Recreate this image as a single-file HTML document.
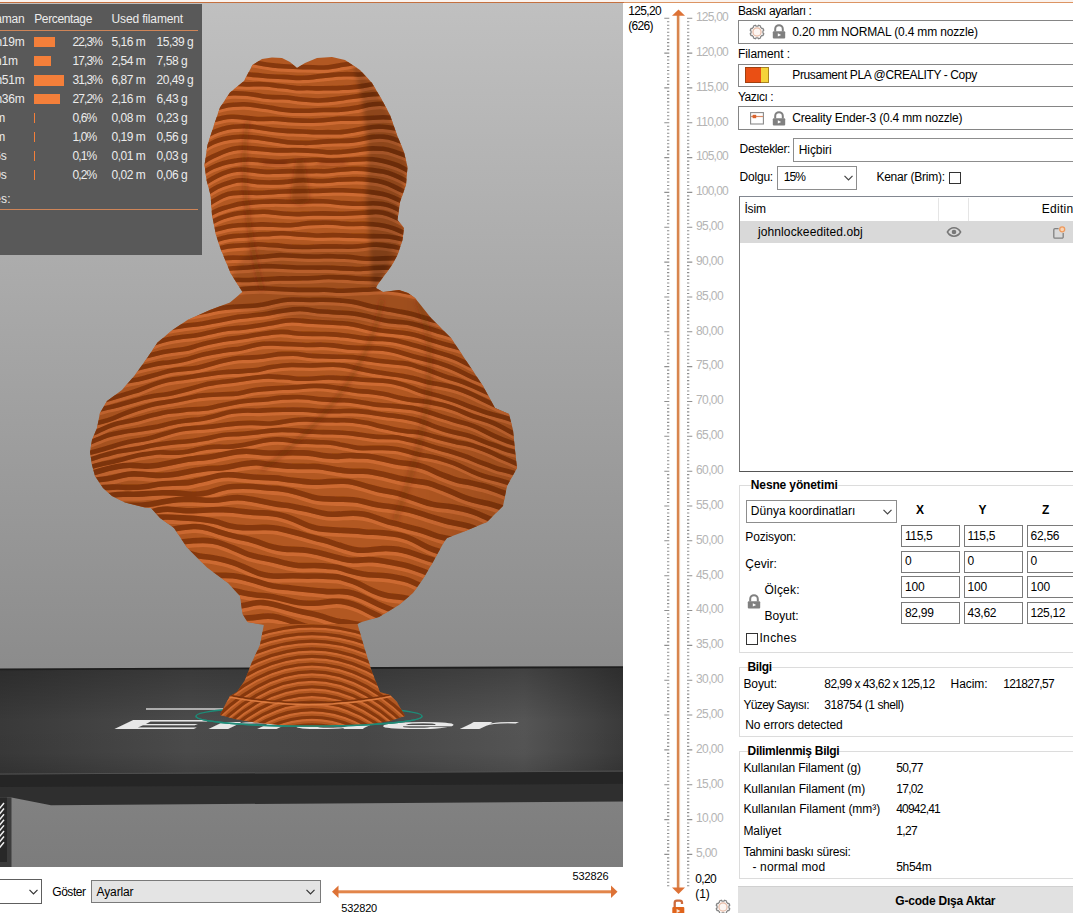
<!DOCTYPE html><html lang="tr"><head><meta charset="utf-8"><title>PrusaSlicer</title>
<style>
html,body{margin:0;padding:0;}
html{width:1073px;height:913px;overflow:hidden;}
body{width:1073px;height:913px;position:relative;overflow:hidden;background:#fff;font-family:"Liberation Sans",sans-serif;font-size:12px;color:#000;}
.t{position:absolute;white-space:nowrap;line-height:20px;height:20px;font-size:12px;}
.b{font-weight:bold;}
.bgw{background:#fff;}
.g{color:#b4b4b4;}
.s11{font-size:11px;}
.lg{color:#ececec;font-size:12px;}
.abs{position:absolute;}
.gl{position:absolute;left:0;top:3px;}
.box{position:absolute;box-sizing:border-box;border:1px solid #7a7a7a;background:#fff;}
.fld{position:absolute;box-sizing:border-box;border:1px solid #7a7a7a;background:#fff;height:22px;width:59px;}
.grp{position:absolute;box-sizing:border-box;border:1px solid #dcdcdc;border-right:none;}
.chev{position:absolute;width:9px;height:6px;}

</style></head><body>
<div class="abs" style="left:0;top:0;width:1073px;height:2px;background:#fbf3ee"></div>
<div class="abs" style="left:0;top:2px;width:624px;height:1px;background:#c4703f"></div><div class="abs" style="left:0;top:3px;width:202px;height:1px;background:#b5683c"></div>
<div class="abs" style="left:624px;top:2px;width:449px;height:1px;background:#dc9463"></div>
<svg class="gl" width="623.3" height="864" viewBox="0 3 623.3 864">
<defs>
<linearGradient id="bg" x1="0" y1="0" x2="0" y2="1"><stop offset="0" stop-color="#c0c0c0"/><stop offset="1" stop-color="#7c7c7c"/></linearGradient>
<linearGradient id="bed" x1="0" y1="0" x2="1" y2="0"><stop offset="0" stop-color="#393939"/><stop offset="0.3" stop-color="#4b4b4b"/><stop offset="0.58" stop-color="#474747"/><stop offset="0.84" stop-color="#555"/><stop offset="1" stop-color="#3a3a3a"/></linearGradient>
<linearGradient id="bedv" x1="0" y1="0" x2="0" y2="1"><stop offset="0" stop-color="#000" stop-opacity="0.24"/><stop offset="0.5" stop-color="#000" stop-opacity="0"/><stop offset="0.8" stop-color="#000" stop-opacity="0.02"/><stop offset="1" stop-color="#000" stop-opacity="0.14"/></linearGradient>
<linearGradient id="shade" x1="0" y1="0" x2="1" y2="0"><stop offset="0" stop-color="#000" stop-opacity="0.08"/><stop offset="0.25" stop-color="#000" stop-opacity="0"/><stop offset="0.7" stop-color="#000" stop-opacity="0"/><stop offset="1" stop-color="#000" stop-opacity="0.14"/></linearGradient>
<filter id="soft" x="-5%" y="-5%" width="110%" height="110%"><feGaussianBlur stdDeviation="0.5"/></filter>
<filter id="soft3" x="-10%" y="-10%" width="120%" height="120%"><feGaussianBlur stdDeviation="2.2"/></filter><filter id="soft2" x="-5%" y="-50%" width="110%" height="200%"><feGaussianBlur stdDeviation="0.7 0.5"/></filter>
<clipPath id="mclip"><path d="M262.0,59.0 L272.0,57.5 L282.0,58.0 L290.0,62.0 L297.0,68.0 L305.0,63.0 L317.0,58.0 L332.0,57.0 L345.0,60.0 L360.0,70.0 L372.0,83.0 L382.0,100.0 L390.0,115.0 L397.0,135.0 L404.0,152.0 L407.5,167.0 L406.0,185.0 L400.0,202.0 L397.5,220.0 L404.0,228.0 L402.5,240.0 L397.5,255.0 L392.0,265.0 L387.0,272.0 L378.0,284.0 L376.0,288.0 L383.0,292.0 L399.0,290.0 L408.0,293.0 L415.0,298.0 L431.0,318.0 L451.0,338.0 L467.0,362.0 L483.0,386.0 L495.0,408.0 L509.0,414.0 L513.0,430.0 L515.0,450.0 L517.0,468.0 L507.0,486.0 L503.0,506.0 L487.0,522.0 L463.0,532.0 L447.0,538.0 L444.0,542.0 L433.0,562.0 L423.0,579.0 L413.0,593.0 L399.0,605.0 L379.0,617.0 L360.0,622.5 L357.5,624.0 L365.0,650.0 L372.0,672.0 L380.0,692.0 L390.0,695.0 L397.0,702.0 L405.0,716.0 L390.0,721.0 L367.0,724.5 L340.0,726.0 L312.0,726.5 L285.0,725.5 L255.0,722.5 L235.0,719.0 L220.0,715.0 L225.0,705.0 L230.0,696.0 L237.0,692.0 L245.0,680.0 L252.0,662.0 L260.0,645.0 L264.0,624.0 L264.0,625.0 L247.5,622.0 L242.5,614.0 L240.0,596.0 L228.0,583.0 L207.0,567.5 L187.0,547.5 L174.0,528.0 L160.0,518.0 L151.0,508.0 L145.0,507.5 L125.0,502.5 L112.0,496.0 L103.0,488.0 L95.0,476.0 L92.0,465.0 L90.0,452.0 L92.0,440.0 L97.0,428.0 L100.0,413.0 L107.0,401.0 L122.0,390.0 L135.0,375.0 L147.5,357.5 L157.5,342.5 L172.5,330.0 L187.5,320.0 L210.0,310.0 L230.0,302.5 L242.5,292.0 L238.0,285.0 L231.0,274.0 L226.0,262.0 L221.0,250.0 L216.0,235.0 L212.0,215.0 L210.5,195.0 L206.5,180.0 L204.5,165.0 L207.5,145.0 L214.0,125.0 L220.0,107.5 L230.0,92.5 L244.0,81.0 L252.5,65.0Z"/></clipPath>
<clipPath id="cbody"><rect x="80" y="50" width="450" height="574"/></clipPath><clipPath id="cped"><rect x="200" y="624" width="230" height="110"/></clipPath>
</defs>
<rect x="0" y="3" width="624" height="864" fill="url(#bg)"/>
<polygon points="0,669.2 624,667 624,771.4 0,774.4" fill="url(#bed)"/>
<polygon points="0,669.2 624,667 624,771.4 0,774.4" fill="url(#bedv)"/>
<polygon points="0,668.4 624,666.2 624,668 0,670.2" fill="#1e1e1e"/>
<polygon points="0,774.4 624,771.4 624,801.5 51,805.2 11.5,797.5 0,797.5" fill="#2f2f2f"/>
<polygon points="0,774.4 624,771.4 624,783.8 0,787" fill="#252525"/>
<polygon points="0,773.6 624,770.6 624,771.6 0,774.600" fill="#505050"/>
<rect x="0" y="797.5" width="11.5" height="69.5" fill="#3c3c3c"/>
<rect x="0" y="797.5" width="7" height="64.5" fill="#282828"/>
<path d="M-0.5,808.5L4,803.0M-0.5,814.1L4,808.6M-0.5,819.7L4,814.2M-0.5,825.3L4,819.8M-0.5,830.9L4,825.4M-0.5,836.5L4,831.0M-0.5,842.1L4,836.6M-0.5,847.7L4,842.2" stroke="#f0f0f0" stroke-width="1.5" fill="none"/>
<g filter="url(#soft2)"><text transform="translate(112,729) scale(1.57,0.135)" x="0" y="0" font-family="Liberation Sans, sans-serif" font-style="italic" font-weight="bold" font-size="90" fill="#f4f4f4" opacity="0.93">Ender</text></g>
<rect x="146" y="708.3" width="77" height="1.4" fill="#f4f4f4" opacity="0.85" filter="url(#soft2)"/>
<ellipse cx="309" cy="716.3" rx="113" ry="9.8" fill="none" stroke="#1f8a77" stroke-width="1.5"/>
<path d="M262.0,59.0 L272.0,57.5 L282.0,58.0 L290.0,62.0 L297.0,68.0 L305.0,63.0 L317.0,58.0 L332.0,57.0 L345.0,60.0 L360.0,70.0 L372.0,83.0 L382.0,100.0 L390.0,115.0 L397.0,135.0 L404.0,152.0 L407.5,167.0 L406.0,185.0 L400.0,202.0 L397.5,220.0 L404.0,228.0 L402.5,240.0 L397.5,255.0 L392.0,265.0 L387.0,272.0 L378.0,284.0 L376.0,288.0 L383.0,292.0 L399.0,290.0 L408.0,293.0 L415.0,298.0 L431.0,318.0 L451.0,338.0 L467.0,362.0 L483.0,386.0 L495.0,408.0 L509.0,414.0 L513.0,430.0 L515.0,450.0 L517.0,468.0 L507.0,486.0 L503.0,506.0 L487.0,522.0 L463.0,532.0 L447.0,538.0 L444.0,542.0 L433.0,562.0 L423.0,579.0 L413.0,593.0 L399.0,605.0 L379.0,617.0 L360.0,622.5 L357.5,624.0 L365.0,650.0 L372.0,672.0 L380.0,692.0 L390.0,695.0 L397.0,702.0 L405.0,716.0 L390.0,721.0 L367.0,724.5 L340.0,726.0 L312.0,726.5 L285.0,725.5 L255.0,722.5 L235.0,719.0 L220.0,715.0 L225.0,705.0 L230.0,696.0 L237.0,692.0 L245.0,680.0 L252.0,662.0 L260.0,645.0 L264.0,624.0 L264.0,625.0 L247.5,622.0 L242.5,614.0 L240.0,596.0 L228.0,583.0 L207.0,567.5 L187.0,547.5 L174.0,528.0 L160.0,518.0 L151.0,508.0 L145.0,507.5 L125.0,502.5 L112.0,496.0 L103.0,488.0 L95.0,476.0 L92.0,465.0 L90.0,452.0 L92.0,440.0 L97.0,428.0 L100.0,413.0 L107.0,401.0 L122.0,390.0 L135.0,375.0 L147.5,357.5 L157.5,342.5 L172.5,330.0 L187.5,320.0 L210.0,310.0 L230.0,302.5 L242.5,292.0 L238.0,285.0 L231.0,274.0 L226.0,262.0 L221.0,250.0 L216.0,235.0 L212.0,215.0 L210.5,195.0 L206.5,180.0 L204.5,165.0 L207.5,145.0 L214.0,125.0 L220.0,107.5 L230.0,92.5 L244.0,81.0 L252.5,65.0Z" fill="#b25822"/>
<g clip-path="url(#mclip)"><g fill="none" stroke-linejoin="round" filter="url(#soft)">
<defs><path id="st" d="M88,280.8Q98,253.4 103.0,240.3Q108,227.1 113.0,214.8Q118,202.4 123.0,191.7Q128,181.0 133.0,171.4Q138,161.9 143.0,152.7Q148,143.4 153.0,134.9Q158,126.3 163.0,118.3Q168,110.3 173.0,103.3Q178,96.3 183.0,90.7Q188,85.1 193.0,80.4Q198,75.7 203.0,71.6Q208,67.5 213.0,65.4Q218,63.3 223.0,61.7Q228,60.2 233.0,60.0Q238,59.8 243.0,60.5Q248,61.2 253.0,62.1Q258,63.0 263.0,63.9Q268,64.8 273.0,65.4Q278,66.0 283.0,66.2Q288,66.3 293.0,66.7Q298,67.1 303.0,67.1Q308,67.1 313.0,67.2Q318,67.4 323.0,67.5Q328,67.6 333.0,66.6Q338,65.5 343.0,64.8Q348,64.1 353.0,63.1Q358,62.1 363.0,61.7Q368,61.3 373.0,61.0Q378,60.6 383.0,61.1Q388,61.7 393.0,62.4Q398,63.2 403.0,65.2Q408,67.2 413.0,71.1Q418,75.1 423.0,80.2Q428,85.4 433.0,91.7Q438,98.0 443.0,104.9Q448,111.8 453.0,118.8Q458,125.8 463.0,133.9Q468,142.1 473.0,151.2Q478,160.3 483.0,170.5Q488,180.7 493.0,191.9Q498,203.1 503.0,215.2Q508,227.4 513.0,240.1Q518,252.8 523.0,266.6L528,280.5M88,292.4Q98,264.8 103.0,252.0Q108,239.2 113.0,227.4Q118,215.5 123.0,204.3Q128,193.1 133.0,182.5Q138,171.9 143.0,162.5Q148,153.1 153.0,144.2Q158,135.3 163.0,127.4Q168,119.4 173.0,113.3Q178,107.1 183.0,101.6Q188,96.1 193.0,90.9Q198,85.8 203.0,81.5Q208,77.2 213.0,75.5Q218,73.9 223.0,73.2Q228,72.5 233.0,72.6Q238,72.7 243.0,73.6Q248,74.6 253.0,74.9Q258,75.1 263.0,75.8Q268,76.5 273.0,76.5Q278,76.6 283.0,76.9Q288,77.2 293.0,77.6Q298,78.0 303.0,77.8Q308,77.7 313.0,77.1Q318,76.4 323.0,75.9Q328,75.3 333.0,74.9Q338,74.4 343.0,74.2Q348,74.0 353.0,74.3Q358,74.6 363.0,74.3Q368,74.0 373.0,73.2Q378,72.5 383.0,72.6Q388,72.7 393.0,74.0Q398,75.3 403.0,77.5Q408,79.7 413.0,83.9Q418,88.0 423.0,92.4Q428,96.8 433.0,102.4Q438,108.1 443.0,114.2Q448,120.4 453.0,127.6Q458,134.9 463.0,143.2Q468,151.5 473.0,161.1Q478,170.6 483.0,181.4Q488,192.1 493.0,203.0Q498,213.9 503.0,225.9Q508,237.9 513.0,251.2Q518,264.4 523.0,278.6L528,292.9M88,302.8Q98,275.2 103.0,262.3Q108,249.4 113.0,237.5Q118,225.5 123.0,214.1Q128,202.6 133.0,192.2Q138,181.7 143.0,172.2Q148,162.8 153.0,154.3Q158,145.9 163.0,138.9Q168,131.8 173.0,125.4Q178,119.0 183.0,113.4Q188,107.8 193.0,103.0Q198,98.1 203.0,93.8Q208,89.4 213.0,87.9Q218,86.4 223.0,85.2Q228,84.0 233.0,83.8Q238,83.7 243.0,84.1Q248,84.5 253.0,84.3Q258,84.0 263.0,84.2Q268,84.4 273.0,85.1Q278,85.8 283.0,86.3Q288,86.9 293.0,87.6Q298,88.4 303.0,88.1Q308,87.9 313.0,88.2Q318,88.5 323.0,88.3Q328,88.2 333.0,88.1Q338,88.0 343.0,87.8Q348,87.6 353.0,87.1Q358,86.6 363.0,85.9Q368,85.2 373.0,84.1Q378,83.1 383.0,82.9Q388,82.8 393.0,83.8Q398,84.7 403.0,86.8Q408,88.8 413.0,92.9Q418,97.0 423.0,101.8Q428,106.6 433.0,112.2Q438,117.7 443.0,124.0Q448,130.3 453.0,138.3Q458,146.3 463.0,155.3Q468,164.4 473.0,174.1Q478,183.9 483.0,194.0Q488,204.1 493.0,215.0Q498,225.8 503.0,237.6Q508,249.4 513.0,262.5Q518,275.7 523.0,289.7L528,303.8M88,314.7Q98,286.0 103.0,272.7Q108,259.4 113.0,247.2Q118,235.0 123.0,224.3Q128,213.6 133.0,203.3Q138,193.0 143.0,184.1Q148,175.1 153.0,166.5Q158,158.0 163.0,150.2Q168,142.5 173.0,136.2Q178,129.9 183.0,124.7Q188,119.5 193.0,114.5Q198,109.6 203.0,105.5Q208,101.4 213.0,98.9Q218,96.3 223.0,94.9Q228,93.4 233.0,93.3Q238,93.2 243.0,93.5Q248,93.7 253.0,94.6Q258,95.5 263.0,96.2Q268,96.9 273.0,97.1Q278,97.2 283.0,97.3Q288,97.5 293.0,98.3Q298,99.1 303.0,99.5Q308,99.9 313.0,100.3Q318,100.6 323.0,100.3Q328,100.0 333.0,99.4Q338,98.8 343.0,98.1Q348,97.4 353.0,96.8Q358,96.1 363.0,95.4Q368,94.7 373.0,94.2Q378,93.7 383.0,94.0Q388,94.4 393.0,94.9Q398,95.4 403.0,96.9Q408,98.4 413.0,102.9Q418,107.5 423.0,112.4Q428,117.4 433.0,123.5Q438,129.5 443.0,136.4Q448,143.3 453.0,150.6Q458,157.9 463.0,166.4Q468,175.0 473.0,184.5Q478,194.1 483.0,204.4Q488,214.8 493.0,226.1Q498,237.5 503.0,249.0Q508,260.5 513.0,273.2Q518,285.9 523.0,299.5L528,313.2M88,323.5Q98,296.6 103.0,284.0Q108,271.5 113.0,259.3Q118,247.0 123.0,235.8Q128,224.6 133.0,214.4Q138,204.1 143.0,194.7Q148,185.3 153.0,177.7Q158,170.2 163.0,162.7Q168,155.3 173.0,148.2Q178,141.1 183.0,135.3Q188,129.5 193.0,124.1Q198,118.7 203.0,114.5Q208,110.4 213.0,109.0Q218,107.7 223.0,106.4Q228,105.2 233.0,104.8Q238,104.5 243.0,104.3Q248,104.2 253.0,105.1Q258,106.0 263.0,106.5Q268,107.0 273.0,108.0Q278,109.0 283.0,109.8Q288,110.5 293.0,110.6Q298,110.6 303.0,110.8Q308,110.9 313.0,110.5Q318,110.1 323.0,110.0Q328,109.9 333.0,109.9Q338,110.0 343.0,109.4Q348,108.8 353.0,108.1Q358,107.5 363.0,106.2Q368,104.9 373.0,104.3Q378,103.6 383.0,103.9Q388,104.1 393.0,105.7Q398,107.3 403.0,109.5Q408,111.6 413.0,115.3Q418,118.9 423.0,123.9Q428,128.9 433.0,134.5Q438,140.1 443.0,147.2Q448,154.3 453.0,162.2Q458,170.0 463.0,178.7Q468,187.3 473.0,196.1Q478,204.8 483.0,214.7Q488,224.6 493.0,235.7Q498,246.7 503.0,258.8Q508,271.0 513.0,284.0Q518,297.1 523.0,310.8L528,324.4M88,336.9Q98,309.0 103.0,295.7Q108,282.4 113.0,270.8Q118,259.3 123.0,247.9Q128,236.6 133.0,225.7Q138,214.9 143.0,205.0Q148,195.1 153.0,186.5Q158,177.9 163.0,170.6Q168,163.4 173.0,157.0Q178,150.6 183.0,144.9Q188,139.3 193.0,134.4Q198,129.6 203.0,125.7Q208,121.7 213.0,120.2Q218,118.8 223.0,117.7Q228,116.6 233.0,116.8Q238,117.1 243.0,117.5Q248,118.0 253.0,118.5Q258,119.1 263.0,119.0Q268,118.9 273.0,118.8Q278,118.8 283.0,119.4Q288,120.1 293.0,120.2Q298,120.4 303.0,120.6Q308,120.8 313.0,120.7Q318,120.5 323.0,120.2Q328,119.9 333.0,119.2Q338,118.5 343.0,118.6Q348,118.7 353.0,118.6Q358,118.5 363.0,118.3Q368,118.1 373.0,117.7Q378,117.3 383.0,117.2Q388,117.2 393.0,117.7Q398,118.1 403.0,120.1Q408,122.0 413.0,126.3Q418,130.7 423.0,135.3Q428,140.0 433.0,145.2Q438,150.5 443.0,156.7Q448,163.0 453.0,170.3Q458,177.5 463.0,186.6Q468,195.7 473.0,205.3Q478,214.9 483.0,225.7Q488,236.6 493.0,247.6Q498,258.7 503.0,270.4Q508,282.2 513.0,295.3Q518,308.5 523.0,322.6L528,336.7M88,346.9Q98,319.1 103.0,305.9Q108,292.7 113.0,280.3Q118,267.8 123.0,256.5Q128,245.2 133.0,235.0Q138,224.9 143.0,215.9Q148,207.0 153.0,198.7Q158,190.5 163.0,183.3Q168,176.1 173.0,169.2Q178,162.4 183.0,156.4Q188,150.5 193.0,146.0Q198,141.6 203.0,138.2Q208,134.8 213.0,132.4Q218,130.1 223.0,128.7Q228,127.3 233.0,126.8Q238,126.2 243.0,126.2Q248,126.1 253.0,126.8Q258,127.4 263.0,128.3Q268,129.2 273.0,129.7Q278,130.2 283.0,130.6Q288,131.1 293.0,131.1Q298,131.2 303.0,131.5Q308,131.8 313.0,132.1Q318,132.4 323.0,132.2Q328,132.0 333.0,132.2Q338,132.4 343.0,131.9Q348,131.4 353.0,130.5Q358,129.6 363.0,128.6Q368,127.6 373.0,127.0Q378,126.4 383.0,126.8Q388,127.2 393.0,128.1Q398,129.0 403.0,130.6Q408,132.2 413.0,136.1Q418,140.0 423.0,144.8Q428,149.6 433.0,155.7Q438,161.8 443.0,168.8Q448,175.8 453.0,183.5Q458,191.2 463.0,199.9Q468,208.6 473.0,217.8Q478,227.0 483.0,237.0Q488,247.1 493.0,258.5Q498,269.8 503.0,281.9Q508,294.0 513.0,307.1Q518,320.1 523.0,333.6L528,347.0M88,357.5Q98,330.7 103.0,317.8Q108,304.8 113.0,292.8Q118,280.8 123.0,269.5Q128,258.2 133.0,247.8Q138,237.5 143.0,228.3Q148,219.2 153.0,211.0Q158,202.8 163.0,195.6Q168,188.3 173.0,182.1Q178,175.9 183.0,169.6Q188,163.4 193.0,158.1Q198,152.8 203.0,148.7Q208,144.7 213.0,142.5Q218,140.3 223.0,139.0Q228,137.8 233.0,137.2Q238,136.6 243.0,136.8Q248,137.0 253.0,137.3Q258,137.7 263.0,138.5Q268,139.3 273.0,140.0Q278,140.7 283.0,141.6Q288,142.5 293.0,142.5Q298,142.6 303.0,142.8Q308,143.0 313.0,142.5Q318,142.1 323.0,141.6Q328,141.2 333.0,141.1Q338,141.0 343.0,140.9Q348,140.9 353.0,140.4Q358,140.0 363.0,138.7Q368,137.4 373.0,136.9Q378,136.3 383.0,136.6Q388,136.8 393.0,138.6Q398,140.4 403.0,142.5Q408,144.6 413.0,148.8Q418,153.1 423.0,158.1Q428,163.1 433.0,168.5Q438,173.8 443.0,180.6Q448,187.4 453.0,195.2Q458,203.0 463.0,211.8Q468,220.5 473.0,229.8Q478,239.1 483.0,249.2Q488,259.2 493.0,269.7Q498,280.2 503.0,292.2Q508,304.2 513.0,317.3Q518,330.3 523.0,344.6L528,358.8M88,371.4Q98,343.9 103.0,330.6Q108,317.3 113.0,304.5Q118,291.8 123.0,280.3Q128,268.7 133.0,259.0Q138,249.4 143.0,240.4Q148,231.5 153.0,223.1Q158,214.6 163.0,206.9Q168,199.3 173.0,192.6Q178,185.9 183.0,180.4Q188,174.9 193.0,170.5Q198,166.2 203.0,162.4Q208,158.6 213.0,156.4Q218,154.2 223.0,152.0Q228,149.8 233.0,148.7Q238,147.7 243.0,147.8Q248,147.9 253.0,148.4Q258,148.8 263.0,149.2Q268,149.6 273.0,150.1Q278,150.5 283.0,150.4Q288,150.3 293.0,150.1Q298,150.0 303.0,150.4Q308,150.8 313.0,151.0Q318,151.2 323.0,151.8Q328,152.5 333.0,152.3Q338,152.1 343.0,151.7Q348,151.3 353.0,150.7Q358,150.0 363.0,149.3Q368,148.5 373.0,148.4Q378,148.4 383.0,148.8Q388,149.3 393.0,151.1Q398,152.8 403.0,154.6Q408,156.3 413.0,160.1Q418,163.9 423.0,168.3Q428,172.7 433.0,179.1Q438,185.5 443.0,192.7Q448,199.8 453.0,207.4Q458,215.0 463.0,223.3Q468,231.6 473.0,240.9Q478,250.2 483.0,260.5Q488,270.8 493.0,282.5Q498,294.2 503.0,306.1Q508,318.1 513.0,331.3Q518,344.5 523.0,357.7L528,371.0M88,384.2Q98,357.0 103.0,343.9Q108,330.7 113.0,318.1Q118,305.4 123.0,294.1Q128,282.8 133.0,272.2Q138,261.5 143.0,252.5Q148,243.4 153.0,235.0Q158,226.6 163.0,218.8Q168,211.0 173.0,203.8Q178,196.6 183.0,191.0Q188,185.4 193.0,181.0Q198,176.5 203.0,172.9Q208,169.2 213.0,167.0Q218,164.8 223.0,163.3Q228,161.8 233.0,161.1Q238,160.3 243.0,159.8Q248,159.4 253.0,159.7Q258,160.0 263.0,160.6Q268,161.3 273.0,161.5Q278,161.8 283.0,161.6Q288,161.4 293.0,160.8Q298,160.2 303.0,160.2Q308,160.3 313.0,159.9Q318,159.6 323.0,160.1Q328,160.7 333.0,160.5Q338,160.3 343.0,160.1Q348,159.9 353.0,159.6Q358,159.3 363.0,159.1Q368,158.8 373.0,159.3Q378,159.8 383.0,161.0Q388,162.2 393.0,163.8Q398,165.3 403.0,168.0Q408,170.6 413.0,173.7Q418,176.9 423.0,181.3Q428,185.6 433.0,191.3Q438,197.0 443.0,204.1Q448,211.1 453.0,218.8Q458,226.5 463.0,234.4Q468,242.3 473.0,251.4Q478,260.5 483.0,271.2Q488,281.8 493.0,293.1Q498,304.4 503.0,317.4Q508,330.4 513.0,343.5Q518,356.6 523.0,370.5L528,384.4M88,395.4Q98,367.5 103.0,354.6Q108,341.8 113.0,329.4Q118,316.9 123.0,306.3Q128,295.7 133.0,285.3Q138,275.0 143.0,265.9Q148,256.8 153.0,247.9Q158,238.9 163.0,231.1Q168,223.2 173.0,215.9Q178,208.5 183.0,203.1Q188,197.7 193.0,193.0Q198,188.3 203.0,184.7Q208,181.1 213.0,178.3Q218,175.5 223.0,173.4Q228,171.3 233.0,170.2Q238,169.2 243.0,169.5Q248,169.9 253.0,170.5Q258,171.2 263.0,171.6Q268,172.0 273.0,171.8Q278,171.7 283.0,171.4Q288,171.1 293.0,171.2Q298,171.3 303.0,171.2Q308,171.2 313.0,171.1Q318,171.0 323.0,171.2Q328,171.3 333.0,170.5Q338,169.7 343.0,169.5Q348,169.2 353.0,168.8Q358,168.5 363.0,169.0Q368,169.5 373.0,170.1Q378,170.7 383.0,171.6Q388,172.5 393.0,174.6Q398,176.6 403.0,179.2Q408,181.8 413.0,185.5Q418,189.1 423.0,194.2Q428,199.2 433.0,205.2Q438,211.2 443.0,217.9Q448,224.6 453.0,231.4Q458,238.1 463.0,246.3Q468,254.6 473.0,263.7Q478,272.8 483.0,283.2Q488,293.5 493.0,305.1Q498,316.6 503.0,329.0Q508,341.4 513.0,354.0Q518,366.6 523.0,380.8L528,395.0M88,407.9Q98,379.5 103.0,366.7Q108,353.9 113.0,341.9Q118,329.8 123.0,318.5Q128,307.2 133.0,297.0Q138,286.9 143.0,277.5Q148,268.2 153.0,259.8Q158,251.4 163.0,242.9Q168,234.3 173.0,227.8Q178,221.3 183.0,215.2Q188,209.1 193.0,204.8Q198,200.5 203.0,196.4Q208,192.3 213.0,189.4Q218,186.4 223.0,184.6Q228,182.7 233.0,181.4Q238,180.0 243.0,180.3Q248,180.6 253.0,181.4Q258,182.2 263.0,182.3Q268,182.5 273.0,182.4Q278,182.4 283.0,182.1Q288,181.7 293.0,181.0Q298,180.3 303.0,180.3Q308,180.4 313.0,180.8Q318,181.1 323.0,181.0Q328,180.9 333.0,180.2Q338,179.6 343.0,179.5Q348,179.3 353.0,179.1Q358,178.9 363.0,179.3Q368,179.7 373.0,180.3Q378,180.8 383.0,182.2Q388,183.6 393.0,186.1Q398,188.6 403.0,191.0Q408,193.4 413.0,197.6Q418,201.7 423.0,206.3Q428,210.9 433.0,217.0Q438,223.0 443.0,229.4Q448,235.8 453.0,243.1Q458,250.3 463.0,258.2Q468,266.0 473.0,275.4Q478,284.8 483.0,295.0Q488,305.1 493.0,316.9Q498,328.8 503.0,340.9Q508,353.1 513.0,365.9Q518,378.7 523.0,392.7L528,406.6M88,419.3Q98,391.0 103.0,378.2Q108,365.5 113.0,353.4Q118,341.3 123.0,330.2Q128,319.1 133.0,308.6Q138,298.1 143.0,288.4Q148,278.6 153.0,269.7Q158,260.8 163.0,252.8Q168,244.8 173.0,238.2Q178,231.6 183.0,226.4Q188,221.2 193.0,216.6Q198,212.0 203.0,208.2Q208,204.4 213.0,201.3Q218,198.1 223.0,195.8Q228,193.6 233.0,193.1Q238,192.5 243.0,192.6Q248,192.7 253.0,192.8Q258,192.9 263.0,192.7Q268,192.5 273.0,192.1Q278,191.7 283.0,191.5Q288,191.3 293.0,191.1Q298,191.0 303.0,191.0Q308,191.1 313.0,191.0Q318,190.9 323.0,190.6Q328,190.4 333.0,190.3Q338,190.1 343.0,190.3Q348,190.6 353.0,190.7Q358,190.7 363.0,191.2Q368,191.7 373.0,192.4Q378,193.0 383.0,194.1Q388,195.1 393.0,197.4Q398,199.6 403.0,201.9Q408,204.3 413.0,208.5Q418,212.7 423.0,217.8Q428,222.9 433.0,228.2Q438,233.6 443.0,240.0Q448,246.5 453.0,253.5Q458,260.5 463.0,268.7Q468,276.8 473.0,286.4Q478,295.9 483.0,306.6Q488,317.2 493.0,329.1Q498,341.0 503.0,353.1Q508,365.2 513.0,378.2Q518,391.2 523.0,404.7L528,418.2M88,423.5Q98,396.5 103.0,383.9Q108,371.2 113.0,359.7Q118,348.1 123.0,336.3Q128,324.5 133.0,314.4Q138,304.3 143.0,295.1Q148,285.9 153.0,277.8Q158,269.6 163.0,262.7Q168,255.8 173.0,249.7Q178,243.7 183.0,237.7Q188,231.7 193.0,227.2Q198,222.6 203.0,219.0Q208,215.4 213.0,212.6Q218,209.9 223.0,208.3Q228,206.7 233.0,205.4Q238,204.1 243.0,203.4Q248,202.8 253.0,202.4Q258,202.0 263.0,201.7Q268,201.5 273.0,201.4Q278,201.3 283.0,201.6Q288,201.9 293.0,201.8Q298,201.8 303.0,201.4Q308,201.1 313.0,201.1Q318,201.2 323.0,201.2Q328,201.2 333.0,202.0Q338,202.8 343.0,203.0Q348,203.3 353.0,203.6Q358,203.8 363.0,203.6Q368,203.3 373.0,203.2Q378,203.2 383.0,204.1Q388,204.9 393.0,207.0Q398,209.1 403.0,212.4Q408,215.8 413.0,219.2Q418,222.6 423.0,226.9Q428,231.2 433.0,236.4Q438,241.6 443.0,248.2Q448,254.8 453.0,262.2Q458,269.7 463.0,278.3Q468,286.9 473.0,296.6Q478,306.2 483.0,316.0Q488,325.7 493.0,336.6Q498,347.5 503.0,359.4Q508,371.4 513.0,384.3Q518,397.3 523.0,411.0L528,424.7M88,401.2Q98,378.4 103.0,367.4Q108,356.5 113.0,346.5Q118,336.5 123.0,327.1Q128,317.8 133.0,309.1Q138,300.4 143.0,293.0Q148,285.6 153.0,279.3Q158,272.9 163.0,266.8Q168,260.7 173.0,255.1Q178,249.5 183.0,244.2Q188,238.9 193.0,234.6Q198,230.4 203.0,227.3Q208,224.2 213.0,221.6Q218,219.0 223.0,217.2Q228,215.4 233.0,214.2Q238,213.1 243.0,212.7Q248,212.3 253.0,212.1Q258,211.9 263.0,211.8Q268,211.7 273.0,212.5Q278,213.2 283.0,213.5Q288,213.8 293.0,214.0Q298,214.2 303.0,213.9Q308,213.6 313.0,213.5Q318,213.4 323.0,213.4Q328,213.4 333.0,213.6Q338,213.8 343.0,213.7Q348,213.5 353.0,213.3Q358,213.1 363.0,212.8Q368,212.5 373.0,212.1Q378,211.7 383.0,212.8Q388,213.8 393.0,216.2Q398,218.5 403.0,221.1Q408,223.7 413.0,227.0Q418,230.4 423.0,234.3Q428,238.2 433.0,243.2Q438,248.3 443.0,253.7Q448,259.1 453.0,266.1Q458,273.0 463.0,280.4Q468,287.7 473.0,295.0Q478,302.3 483.0,310.5Q488,318.7 493.0,327.8Q498,336.9 503.0,346.8Q508,356.7 513.0,367.5Q518,378.3 523.0,389.8L528,401.3M88,381.3Q98,362.5 103.0,353.9Q108,345.4 113.0,337.1Q118,328.9 123.0,320.9Q128,312.9 133.0,305.1Q138,297.4 143.0,290.8Q148,284.1 153.0,278.4Q158,272.7 163.0,267.7Q168,262.7 173.0,257.6Q178,252.4 183.0,248.5Q188,244.6 193.0,240.9Q198,237.3 203.0,234.5Q208,231.8 213.0,230.3Q218,228.9 223.0,227.7Q228,226.5 233.0,225.8Q238,225.0 243.0,225.0Q248,225.0 253.0,224.7Q258,224.3 263.0,224.4Q268,224.5 273.0,224.7Q278,224.8 283.0,225.1Q288,225.4 293.0,225.0Q298,224.7 303.0,223.8Q308,223.0 313.0,222.9Q318,222.7 323.0,222.6Q328,222.5 333.0,222.8Q338,223.1 343.0,223.6Q348,224.1 353.0,224.0Q358,223.9 363.0,223.8Q368,223.8 373.0,224.2Q378,224.6 383.0,225.4Q388,226.3 393.0,228.1Q398,230.0 403.0,232.3Q408,234.7 413.0,237.4Q418,240.1 423.0,243.0Q428,245.8 433.0,249.4Q438,253.0 443.0,257.3Q448,261.5 453.0,266.7Q458,271.8 463.0,278.1Q468,284.4 473.0,290.7Q478,297.0 483.0,303.9Q488,310.9 493.0,318.6Q498,326.3 503.0,334.6Q508,342.9 513.0,352.5Q518,362.1 523.0,372.0L528,382.0M88,360.2Q98,344.7 103.0,337.4Q108,330.0 113.0,323.2Q118,316.4 123.0,310.6Q128,304.7 133.0,298.9Q138,293.1 143.0,287.6Q148,282.0 153.0,277.2Q158,272.3 163.0,268.8Q168,265.3 173.0,262.0Q178,258.7 183.0,255.9Q188,253.2 193.0,250.7Q198,248.2 203.0,245.7Q208,243.2 213.0,241.3Q218,239.5 223.0,238.0Q228,236.5 233.0,236.1Q238,235.6 243.0,235.5Q248,235.3 253.0,234.7Q258,234.1 263.0,234.1Q268,234.2 273.0,233.6Q278,233.1 283.0,233.3Q288,233.5 293.0,233.9Q298,234.4 303.0,234.6Q308,234.9 313.0,235.3Q318,235.6 323.0,235.4Q328,235.1 333.0,235.1Q338,235.1 343.0,235.4Q348,235.6 353.0,235.7Q358,235.8 363.0,235.9Q368,236.1 373.0,236.1Q378,236.2 383.0,236.3Q388,236.5 393.0,237.3Q398,238.2 403.0,239.5Q408,240.9 413.0,243.3Q418,245.6 423.0,248.3Q428,251.0 433.0,254.3Q438,257.6 443.0,261.0Q448,264.5 453.0,268.8Q458,273.1 463.0,278.2Q468,283.3 473.0,289.0Q478,294.7 483.0,300.5Q488,306.3 493.0,312.5Q498,318.8 503.0,324.8Q508,330.8 513.0,338.1Q518,345.5 523.0,353.0L528,360.5M88,338.2Q98,326.8 103.0,321.9Q108,316.9 113.0,311.9Q118,307.0 123.0,302.3Q128,297.6 133.0,293.6Q138,289.5 143.0,285.5Q148,281.5 153.0,278.6Q158,275.7 163.0,273.1Q168,270.4 173.0,267.6Q178,264.8 183.0,262.1Q188,259.3 193.0,257.1Q198,254.9 203.0,252.8Q208,250.7 213.0,249.6Q218,248.6 223.0,247.5Q228,246.3 233.0,245.9Q238,245.6 243.0,245.3Q248,245.1 253.0,244.6Q258,244.0 263.0,244.5Q268,245.0 273.0,245.1Q278,245.1 283.0,245.9Q288,246.6 293.0,246.7Q298,246.7 303.0,247.0Q308,247.2 313.0,246.8Q318,246.4 323.0,246.4Q328,246.4 333.0,246.4Q338,246.3 343.0,246.5Q348,246.7 353.0,246.5Q358,246.4 363.0,245.7Q368,245.1 373.0,244.8Q378,244.4 383.0,245.1Q388,245.8 393.0,246.6Q398,247.4 403.0,249.4Q408,251.4 413.0,252.9Q418,254.4 423.0,256.3Q428,258.2 433.0,260.5Q438,262.8 443.0,266.0Q448,269.2 453.0,272.7Q458,276.3 463.0,279.8Q468,283.3 473.0,287.2Q478,291.1 483.0,294.7Q488,298.3 493.0,302.8Q498,307.3 503.0,311.9Q508,316.6 513.0,321.8Q518,327.0 523.0,332.8L528,338.7M88,320.0Q98,311.1 103.0,307.4Q108,303.6 113.0,300.6Q118,297.5 123.0,294.3Q128,291.2 133.0,288.3Q138,285.4 143.0,282.3Q148,279.2 153.0,277.0Q158,274.8 163.0,272.6Q168,270.4 173.0,269.3Q178,268.2 183.0,266.7Q188,265.2 193.0,264.4Q198,263.6 203.0,262.5Q208,261.4 213.0,260.2Q218,258.9 223.0,258.3Q228,257.6 233.0,257.6Q238,257.7 243.0,257.8Q248,257.9 253.0,257.5Q258,257.0 263.0,256.7Q268,256.3 273.0,255.7Q278,255.0 283.0,255.2Q288,255.3 293.0,255.7Q298,256.1 303.0,256.2Q308,256.3 313.0,256.5Q318,256.7 323.0,256.3Q328,256.0 333.0,256.3Q338,256.7 343.0,256.6Q348,256.5 353.0,257.3Q358,258.2 363.0,258.5Q368,258.8 373.0,258.7Q378,258.7 383.0,258.4Q388,258.1 393.0,258.1Q398,258.2 403.0,258.9Q408,259.6 413.0,261.0Q418,262.3 423.0,263.6Q428,264.8 433.0,266.4Q438,268.0 443.0,269.2Q448,270.3 453.0,272.4Q458,274.6 463.0,277.4Q468,280.1 473.0,283.1Q478,286.0 483.0,289.2Q488,292.4 493.0,295.3Q498,298.2 503.0,301.3Q508,304.4 513.0,307.9Q518,311.3 523.0,315.4L528,319.6M88,320.2Q98,312.5 103.0,309.9Q108,307.3 113.0,304.7Q118,302.2 123.0,299.2Q128,296.1 133.0,293.8Q138,291.4 143.0,289.0Q148,286.6 153.0,284.6Q158,282.6 163.0,281.5Q168,280.4 173.0,279.4Q178,278.3 183.0,277.0Q188,275.6 193.0,274.6Q198,273.5 203.0,272.1Q208,270.7 213.0,270.3Q218,269.9 223.0,269.3Q228,268.7 233.0,268.3Q238,267.9 243.0,267.8Q248,267.7 253.0,267.0Q258,266.3 263.0,266.2Q268,266.1 273.0,266.3Q278,266.5 283.0,266.8Q288,267.0 293.0,267.3Q298,267.6 303.0,267.5Q308,267.4 313.0,267.5Q318,267.7 323.0,267.5Q328,267.3 333.0,267.8Q338,268.3 343.0,268.4Q348,268.4 353.0,268.8Q358,269.2 363.0,268.8Q368,268.5 373.0,268.0Q378,267.6 383.0,267.6Q388,267.7 393.0,267.8Q398,268.0 403.0,268.8Q408,269.7 413.0,271.1Q418,272.5 423.0,273.2Q428,273.9 433.0,275.3Q438,276.7 443.0,278.3Q448,279.8 453.0,281.7Q458,283.6 463.0,285.9Q468,288.2 473.0,290.6Q478,293.1 483.0,295.8Q488,298.5 493.0,300.4Q498,302.3 503.0,305.0Q508,307.8 513.0,310.7Q518,313.7 523.0,316.8L528,319.9M88,331.0Q98,324.7 103.0,322.0Q108,319.2 113.0,316.6Q118,314.0 123.0,311.5Q128,309.0 133.0,306.1Q138,303.3 143.0,300.6Q148,297.9 153.0,295.7Q158,293.6 163.0,292.2Q168,290.8 173.0,289.3Q178,287.7 183.0,286.6Q188,285.5 193.0,283.8Q198,282.1 203.0,281.5Q208,280.9 213.0,280.2Q218,279.4 223.0,279.6Q228,279.7 233.0,279.8Q238,279.9 243.0,280.0Q248,280.1 253.0,279.7Q258,279.3 263.0,279.2Q268,279.2 273.0,278.7Q278,278.2 283.0,278.4Q288,278.5 293.0,278.4Q298,278.3 303.0,278.3Q308,278.3 313.0,278.0Q318,277.7 323.0,277.2Q328,276.8 333.0,277.1Q338,277.4 343.0,277.4Q348,277.4 353.0,278.1Q358,278.7 363.0,278.8Q368,278.8 373.0,279.0Q378,279.2 383.0,279.5Q388,279.8 393.0,280.3Q398,280.8 403.0,281.4Q408,282.1 413.0,283.2Q418,284.4 423.0,285.5Q428,286.6 433.0,287.7Q438,288.7 443.0,289.3Q448,289.9 453.0,291.7Q458,293.6 463.0,295.8Q468,297.9 473.0,300.4Q478,302.9 483.0,305.1Q488,307.3 493.0,310.0Q498,312.7 503.0,315.2Q508,317.8 513.0,321.3Q518,324.7 523.0,327.9L528,331.2M88,341.0Q98,334.5 103.0,331.7Q108,328.8 113.0,326.1Q118,323.4 123.0,320.6Q128,317.7 133.0,315.0Q138,312.3 143.0,310.6Q148,308.8 153.0,307.3Q158,305.7 163.0,304.4Q168,303.1 173.0,301.6Q178,300.1 183.0,298.6Q188,297.1 193.0,296.1Q198,295.0 203.0,294.2Q208,293.3 213.0,292.6Q218,291.9 223.0,291.2Q228,290.5 233.0,290.0Q238,289.4 243.0,289.0Q248,288.6 253.0,288.4Q258,288.2 263.0,288.3Q268,288.3 273.0,288.7Q278,289.0 283.0,289.2Q288,289.3 293.0,289.6Q298,289.9 303.0,289.9Q308,289.9 313.0,289.9Q318,289.9 323.0,289.7Q328,289.6 333.0,290.2Q338,290.9 343.0,290.8Q348,290.7 353.0,290.3Q358,289.9 363.0,289.8Q368,289.7 373.0,289.2Q378,288.8 383.0,289.0Q388,289.3 393.0,289.7Q398,290.0 403.0,291.2Q408,292.4 413.0,293.2Q418,294.1 423.0,295.1Q428,296.0 433.0,297.3Q438,298.6 443.0,300.5Q448,302.5 453.0,304.7Q458,306.9 463.0,309.0Q468,311.2 473.0,313.1Q478,315.1 483.0,317.3Q488,319.6 493.0,321.9Q498,324.1 503.0,327.0Q508,329.8 513.0,332.6Q518,335.4 523.0,338.8L528,342.3M88,350.0Q98,346.0 103.0,343.7Q108,341.4 113.0,339.3Q118,337.2 123.0,335.8Q128,334.4 133.0,332.3Q138,330.2 143.0,328.0Q148,325.8 153.0,323.8Q158,321.7 163.0,319.9Q168,318.0 173.0,316.9Q178,315.9 183.0,315.3Q188,314.7 193.0,313.8Q198,312.9 203.0,311.9Q208,310.9 213.0,309.7Q218,308.4 223.0,307.9Q228,307.3 233.0,306.9Q238,306.6 243.0,306.3Q248,306.0 253.0,305.7Q258,305.4 263.0,304.5Q268,303.5 273.0,302.3Q278,301.1 283.0,300.3Q288,299.4 293.0,299.5Q298,299.6 303.0,299.8Q308,300.0 313.0,299.9Q318,299.7 323.0,299.8Q328,299.9 333.0,300.0Q338,300.2 343.0,300.7Q348,301.2 353.0,301.9Q358,302.6 363.0,304.2Q368,305.7 373.0,306.7Q378,307.6 383.0,308.4Q388,309.3 393.0,310.3Q398,311.4 403.0,312.1Q408,312.9 413.0,314.3Q418,315.8 423.0,317.3Q428,318.8 433.0,320.2Q438,321.5 443.0,322.7Q448,323.9 453.0,325.2Q458,326.6 463.0,328.7Q468,330.8 473.0,333.1Q478,335.5 483.0,338.1Q488,340.8 493.0,343.4Q498,346.0 503.0,348.6Q508,351.2 513.0,353.9Q518,356.6 523.0,359.3L528,362.0M88,360.1Q98,355.8 103.0,352.9Q108,350.0 113.0,348.2Q118,346.3 123.0,344.1Q128,342.0 133.0,340.5Q138,339.0 143.0,337.7Q148,336.4 153.0,334.3Q158,332.1 163.0,330.3Q168,328.5 173.0,327.6Q178,326.7 183.0,325.9Q188,325.1 193.0,324.7Q198,324.4 203.0,323.5Q208,322.6 213.0,321.6Q218,320.6 223.0,319.7Q228,318.8 233.0,317.7Q238,316.6 243.0,316.4Q248,316.1 253.0,315.3Q258,314.5 263.0,314.2Q268,313.8 273.0,312.6Q278,311.4 283.0,310.7Q288,310.0 293.0,309.4Q298,308.8 303.0,309.1Q308,309.5 313.0,310.4Q318,311.3 323.0,311.5Q328,311.8 333.0,312.2Q338,312.6 343.0,312.7Q348,312.7 353.0,313.5Q358,314.2 363.0,315.2Q368,316.2 373.0,317.6Q378,319.0 383.0,320.0Q388,321.1 393.0,321.4Q398,321.8 403.0,322.3Q408,322.7 413.0,324.0Q418,325.2 423.0,326.7Q428,328.2 433.0,329.8Q438,331.5 443.0,332.9Q448,334.3 453.0,336.1Q458,338.0 463.0,339.6Q468,341.3 473.0,343.8Q478,346.4 483.0,348.8Q488,351.3 493.0,354.4Q498,357.5 503.0,360.1Q508,362.8 513.0,364.9Q518,367.1 523.0,369.5L528,371.8M88,369.7Q98,364.5 103.0,362.4Q108,360.3 113.0,357.9Q118,355.4 123.0,354.2Q128,352.9 133.0,351.2Q138,349.6 143.0,347.7Q148,345.8 153.0,343.9Q158,341.9 163.0,340.6Q168,339.2 173.0,338.3Q178,337.5 183.0,336.8Q188,336.2 193.0,335.7Q198,335.1 203.0,333.9Q208,332.6 213.0,331.7Q218,330.7 223.0,329.6Q228,328.5 233.0,328.3Q238,328.0 243.0,327.6Q248,327.2 253.0,326.3Q258,325.3 263.0,324.7Q268,324.0 273.0,323.1Q278,322.1 283.0,321.1Q288,320.2 293.0,320.3Q298,320.4 303.0,320.9Q308,321.5 313.0,321.8Q318,322.2 323.0,322.2Q328,322.3 333.0,322.7Q338,323.1 343.0,323.3Q348,323.6 353.0,324.6Q358,325.6 363.0,326.7Q368,327.8 373.0,329.1Q378,330.3 383.0,330.8Q388,331.2 393.0,331.7Q398,332.2 403.0,332.8Q408,333.4 413.0,334.4Q418,335.5 423.0,337.3Q428,339.2 433.0,340.6Q438,342.1 443.0,343.6Q448,345.0 453.0,346.3Q458,347.5 463.0,349.4Q468,351.2 473.0,353.9Q478,356.6 483.0,359.5Q488,362.5 493.0,365.1Q498,367.8 503.0,370.0Q508,372.1 513.0,374.1Q518,376.2 523.0,378.8L528,381.3M88,377.0Q98,371.9 103.0,370.1Q108,368.4 113.0,366.7Q118,365.1 123.0,363.5Q128,362.0 133.0,360.2Q138,358.5 143.0,357.1Q148,355.7 153.0,354.5Q158,353.3 163.0,352.1Q168,351.0 173.0,350.5Q178,349.9 183.0,349.3Q188,348.7 193.0,347.0Q198,345.4 203.0,344.1Q208,342.7 213.0,341.7Q218,340.7 223.0,339.8Q228,338.9 233.0,338.4Q238,337.9 243.0,337.1Q248,336.3 253.0,335.3Q258,334.3 263.0,333.7Q268,333.1 273.0,332.4Q278,331.7 283.0,331.9Q288,332.1 293.0,332.9Q298,333.7 303.0,333.7Q308,333.7 313.0,333.9Q318,334.1 323.0,334.0Q328,333.9 333.0,334.4Q338,334.8 343.0,335.3Q348,335.8 353.0,336.5Q358,337.1 363.0,337.9Q368,338.6 373.0,338.6Q378,338.7 383.0,339.0Q388,339.3 393.0,340.1Q398,340.9 403.0,342.3Q408,343.6 413.0,345.0Q418,346.3 423.0,347.8Q428,349.3 433.0,350.9Q438,352.6 443.0,353.9Q448,355.2 453.0,357.1Q458,359.0 463.0,361.6Q468,364.3 473.0,366.6Q478,368.8 483.0,371.2Q488,373.6 493.0,375.1Q498,376.5 503.0,378.7Q508,381.0 513.0,383.1Q518,385.2 523.0,387.7L528,390.2M88,385.3Q98,381.2 103.0,379.9Q108,378.5 113.0,377.1Q118,375.7 123.0,373.9Q128,372.1 133.0,370.2Q138,368.3 143.0,367.1Q148,365.9 153.0,364.7Q158,363.4 163.0,362.9Q168,362.4 173.0,361.7Q178,361.1 183.0,360.0Q188,359.0 193.0,357.4Q198,355.8 203.0,354.5Q208,353.2 213.0,352.4Q218,351.6 223.0,350.7Q228,349.9 233.0,349.4Q238,349.0 243.0,347.9Q248,346.8 253.0,345.6Q258,344.4 263.0,343.8Q268,343.3 273.0,343.5Q278,343.7 283.0,343.9Q288,344.1 293.0,344.3Q298,344.5 303.0,344.8Q308,345.2 313.0,344.9Q318,344.6 323.0,344.7Q328,344.8 333.0,345.4Q338,345.9 343.0,346.7Q348,347.5 353.0,347.6Q358,347.7 363.0,347.9Q368,348.2 373.0,348.1Q378,348.1 383.0,348.7Q388,349.3 393.0,350.4Q398,351.6 403.0,353.2Q408,354.8 413.0,356.2Q418,357.5 423.0,358.8Q428,360.0 433.0,361.3Q438,362.5 443.0,364.3Q448,366.1 453.0,368.1Q458,370.2 463.0,372.8Q468,375.5 473.0,377.6Q478,379.7 483.0,381.5Q488,383.3 493.0,384.6Q498,385.8 503.0,388.0Q508,390.2 513.0,392.6Q518,395.0 523.0,397.5L528,400.1M88,396.9Q98,392.0 103.0,389.7Q108,387.4 113.0,385.8Q118,384.3 123.0,382.7Q128,381.1 133.0,380.3Q138,379.5 143.0,378.2Q148,376.9 153.0,375.5Q158,374.0 163.0,372.6Q168,371.2 173.0,370.3Q178,369.4 183.0,369.1Q188,368.9 193.0,368.3Q198,367.7 203.0,366.3Q208,364.9 213.0,363.5Q218,362.1 223.0,360.8Q228,359.6 233.0,358.7Q238,357.9 243.0,357.7Q248,357.6 253.0,357.4Q258,357.1 263.0,356.5Q268,355.8 273.0,354.9Q278,354.1 283.0,353.9Q288,353.8 293.0,353.7Q298,353.7 303.0,354.7Q308,355.7 313.0,355.9Q318,356.2 323.0,356.3Q328,356.3 333.0,356.6Q338,356.8 343.0,356.7Q348,356.6 353.0,357.1Q358,357.7 363.0,358.4Q368,359.0 373.0,359.9Q378,360.8 383.0,361.3Q388,361.7 393.0,362.2Q398,362.7 403.0,363.1Q408,363.4 413.0,365.2Q418,366.9 423.0,368.4Q428,369.9 433.0,371.8Q438,373.7 443.0,375.6Q448,377.5 453.0,378.8Q458,380.2 463.0,382.0Q468,383.8 473.0,386.1Q478,388.4 483.0,390.7Q488,392.9 493.0,395.4Q498,398.0 503.0,399.5Q508,401.1 513.0,403.1Q518,405.1 523.0,407.1L528,409.1M88,406.8Q98,402.2 103.0,400.7Q108,399.3 113.0,397.9Q118,396.5 123.0,394.9Q128,393.4 133.0,391.9Q138,390.5 143.0,388.5Q148,386.6 153.0,384.7Q158,382.8 163.0,381.4Q168,380.0 173.0,379.3Q178,378.6 183.0,378.0Q188,377.4 193.0,376.5Q198,375.5 203.0,374.9Q208,374.2 213.0,373.5Q218,372.7 223.0,372.2Q228,371.7 233.0,371.6Q238,371.6 243.0,371.1Q248,370.7 253.0,370.4Q258,370.2 263.0,368.8Q268,367.4 273.0,366.8Q278,366.1 283.0,365.5Q288,364.9 293.0,365.0Q298,365.1 303.0,365.3Q308,365.5 313.0,365.4Q318,365.3 323.0,365.0Q328,364.7 333.0,364.7Q338,364.8 343.0,365.4Q348,366.0 353.0,367.2Q358,368.5 363.0,369.6Q368,370.7 373.0,371.5Q378,372.3 383.0,373.1Q388,374.0 393.0,374.5Q398,375.0 403.0,376.0Q408,377.0 413.0,378.1Q418,379.3 423.0,380.9Q428,382.5 433.0,383.2Q438,384.0 443.0,385.0Q448,385.9 453.0,387.3Q458,388.6 463.0,390.5Q468,392.4 473.0,394.8Q478,397.3 483.0,399.6Q488,402.0 493.0,404.3Q498,406.7 503.0,408.7Q508,410.8 513.0,413.0Q518,415.1 523.0,417.8L528,420.5M88,412.6Q98,410.0 103.0,408.7Q108,407.5 113.0,406.4Q118,405.3 123.0,403.8Q128,402.4 133.0,401.0Q138,399.6 143.0,398.1Q148,396.7 153.0,395.9Q158,395.2 163.0,394.7Q168,394.2 173.0,393.1Q178,391.9 183.0,390.6Q188,389.3 193.0,387.9Q198,386.5 203.0,385.1Q208,383.8 213.0,383.1Q218,382.4 223.0,381.8Q228,381.3 233.0,380.7Q238,380.1 243.0,379.3Q248,378.5 253.0,377.8Q258,377.1 263.0,376.7Q268,376.2 273.0,376.6Q278,377.0 283.0,377.3Q288,377.5 293.0,378.2Q298,378.9 303.0,378.8Q308,378.8 313.0,378.5Q318,378.1 323.0,377.7Q328,377.3 333.0,377.6Q338,378.0 343.0,378.1Q348,378.2 353.0,378.7Q358,379.2 363.0,379.7Q368,380.1 373.0,380.3Q378,380.4 383.0,380.7Q388,381.0 393.0,382.1Q398,383.2 403.0,384.6Q408,386.1 413.0,388.2Q418,390.3 423.0,391.7Q428,393.0 433.0,394.4Q438,395.7 443.0,397.1Q448,398.5 453.0,400.1Q458,401.6 463.0,403.8Q468,406.0 473.0,407.7Q478,409.5 483.0,411.3Q488,413.0 493.0,414.4Q498,415.8 503.0,417.1Q508,418.3 513.0,420.4Q518,422.5 523.0,425.2L528,428.0M88,424.5Q98,422.9 103.0,421.5Q108,420.2 113.0,418.3Q118,416.4 123.0,414.2Q128,412.0 133.0,410.5Q138,409.0 143.0,407.4Q148,405.8 153.0,404.5Q158,403.3 163.0,402.6Q168,401.9 173.0,401.0Q178,400.1 183.0,399.1Q188,398.0 193.0,396.9Q198,395.8 203.0,395.4Q208,395.0 213.0,394.7Q218,394.4 223.0,394.3Q228,394.1 233.0,393.9Q238,393.7 243.0,392.5Q248,391.3 253.0,390.3Q258,389.3 263.0,389.1Q268,388.8 273.0,388.4Q278,388.0 283.0,387.8Q288,387.7 293.0,387.4Q298,387.1 303.0,386.6Q308,386.1 313.0,385.9Q318,385.7 323.0,386.1Q328,386.5 333.0,387.2Q338,387.9 343.0,388.6Q348,389.3 353.0,390.3Q358,391.3 363.0,391.4Q368,391.4 373.0,392.2Q378,393.0 383.0,393.8Q388,394.7 393.0,396.1Q398,397.4 403.0,398.5Q408,399.6 413.0,400.1Q418,400.6 423.0,401.3Q428,402.1 433.0,403.0Q438,403.8 443.0,405.1Q448,406.4 453.0,408.1Q458,409.8 463.0,412.2Q468,414.5 473.0,416.2Q478,417.8 483.0,419.3Q488,420.8 493.0,422.9Q498,425.0 503.0,427.8Q508,430.7 513.0,433.1Q518,435.5 523.0,438.2L528,440.9M88,435.5Q98,431.4 103.0,428.9Q108,426.4 113.0,424.7Q118,423.0 123.0,422.2Q128,421.4 133.0,420.3Q138,419.3 143.0,417.8Q148,416.3 153.0,415.1Q158,413.8 163.0,412.7Q168,411.6 173.0,411.2Q178,410.8 183.0,410.1Q188,409.4 193.0,409.3Q198,409.3 203.0,408.8Q208,408.3 213.0,407.2Q218,406.0 223.0,405.0Q228,404.0 233.0,402.9Q238,401.7 243.0,401.2Q248,400.7 253.0,400.3Q258,399.9 263.0,399.8Q268,399.6 273.0,398.6Q278,397.6 283.0,397.4Q288,397.3 293.0,397.1Q298,396.9 303.0,397.2Q308,397.4 313.0,398.3Q318,399.3 323.0,399.4Q328,399.6 333.0,399.9Q338,400.2 343.0,400.2Q348,400.1 353.0,400.9Q358,401.7 363.0,402.6Q368,403.4 373.0,404.3Q378,405.1 383.0,405.2Q388,405.3 393.0,405.9Q398,406.6 403.0,406.9Q408,407.1 413.0,408.1Q418,409.2 423.0,410.5Q428,411.8 433.0,413.5Q438,415.3 443.0,416.9Q448,418.5 453.0,420.0Q458,421.5 463.0,422.7Q468,423.9 473.0,425.9Q478,427.8 483.0,430.4Q488,433.0 493.0,435.3Q498,437.5 503.0,439.6Q508,441.6 513.0,443.1Q518,444.5 523.0,446.6L528,448.6M88,443.3Q98,439.1 103.0,437.1Q108,435.2 113.0,434.1Q118,433.0 123.0,432.0Q128,431.0 133.0,430.5Q138,430.0 143.0,429.1Q148,428.1 153.0,427.4Q158,426.7 163.0,425.3Q168,423.8 173.0,422.8Q178,421.7 183.0,421.0Q188,420.2 193.0,419.9Q198,419.6 203.0,418.7Q208,417.8 213.0,416.6Q218,415.3 223.0,413.7Q228,412.1 233.0,411.5Q238,410.9 243.0,410.6Q248,410.4 253.0,410.6Q258,410.9 263.0,410.4Q268,410.0 273.0,409.9Q278,409.8 283.0,409.7Q288,409.6 293.0,409.6Q298,409.6 303.0,409.7Q308,409.8 313.0,410.4Q318,410.9 323.0,411.0Q328,411.2 333.0,411.3Q338,411.3 343.0,411.0Q348,410.8 353.0,410.9Q358,411.0 363.0,411.6Q368,412.1 373.0,412.9Q378,413.6 383.0,414.4Q388,415.1 393.0,415.6Q398,416.2 403.0,417.0Q408,417.9 413.0,419.1Q418,420.2 423.0,422.0Q428,423.8 433.0,425.8Q438,427.7 443.0,429.3Q448,430.8 453.0,432.1Q458,433.3 463.0,434.2Q468,435.2 473.0,437.1Q478,439.0 483.0,441.1Q488,443.1 493.0,444.8Q498,446.6 503.0,448.5Q508,450.4 513.0,451.6Q518,452.7 523.0,454.8L528,456.9M88,453.2Q98,450.8 103.0,449.3Q108,447.8 113.0,446.2Q118,444.6 123.0,443.3Q128,441.9 133.0,441.1Q138,440.3 143.0,439.5Q148,438.7 153.0,437.2Q158,435.7 163.0,434.3Q168,432.8 173.0,431.4Q178,429.9 183.0,429.1Q188,428.3 193.0,428.0Q198,427.7 203.0,427.4Q208,427.0 213.0,426.4Q218,425.7 223.0,425.0Q228,424.4 233.0,423.9Q238,423.4 243.0,423.1Q248,422.7 253.0,422.9Q258,423.1 263.0,423.4Q268,423.7 273.0,423.3Q278,422.8 283.0,421.8Q288,420.7 293.0,420.2Q298,419.8 303.0,419.5Q308,419.3 313.0,419.6Q318,419.8 323.0,420.1Q328,420.3 333.0,420.3Q338,420.4 343.0,420.2Q348,420.1 353.0,420.8Q358,421.5 363.0,422.2Q368,422.8 373.0,424.2Q378,425.7 383.0,426.8Q388,427.9 393.0,428.9Q398,429.9 403.0,430.7Q408,431.6 413.0,431.8Q418,432.1 423.0,433.4Q428,434.6 433.0,436.1Q438,437.5 443.0,438.8Q448,440.1 453.0,441.3Q458,442.6 463.0,443.3Q468,444.1 473.0,445.6Q478,447.2 483.0,449.0Q488,450.8 493.0,453.3Q498,455.9 503.0,457.9Q508,459.9 513.0,462.2Q518,464.4 523.0,466.5L528,468.5M88,460.2Q98,456.8 103.0,455.4Q108,454.1 113.0,452.7Q118,451.4 123.0,450.8Q128,450.1 133.0,449.3Q138,448.6 143.0,447.4Q148,446.3 153.0,445.3Q158,444.3 163.0,443.7Q168,443.1 173.0,442.5Q178,442.0 183.0,441.7Q188,441.4 193.0,440.7Q198,439.9 203.0,439.1Q208,438.4 213.0,437.1Q218,435.7 223.0,435.0Q228,434.3 233.0,434.2Q238,434.2 243.0,433.7Q248,433.3 253.0,432.7Q258,432.2 263.0,431.5Q268,430.9 273.0,430.4Q278,429.8 283.0,429.9Q288,430.0 293.0,430.3Q298,430.6 303.0,431.1Q308,431.5 313.0,431.8Q318,432.1 323.0,432.1Q328,432.1 333.0,432.3Q338,432.5 343.0,432.7Q348,433.0 353.0,433.6Q358,434.2 363.0,435.0Q368,435.9 373.0,436.4Q378,437.0 383.0,437.0Q388,437.0 393.0,437.1Q398,437.2 403.0,438.4Q408,439.5 413.0,440.7Q418,441.8 423.0,443.4Q428,445.0 433.0,446.6Q438,448.1 443.0,449.5Q448,450.8 453.0,452.3Q458,453.9 463.0,455.5Q468,457.2 473.0,459.4Q478,461.6 483.0,463.3Q488,465.0 493.0,467.0Q498,469.1 503.0,470.1Q508,471.1 513.0,472.8Q518,474.5 523.0,476.0L528,477.5M88,467.9Q98,464.9 103.0,463.8Q108,462.8 113.0,461.7Q118,460.5 123.0,459.2Q128,457.8 133.0,456.5Q138,455.1 143.0,454.4Q148,453.7 153.0,452.9Q158,452.1 163.0,452.4Q168,452.8 173.0,452.7Q178,452.7 183.0,452.2Q188,451.7 193.0,450.5Q198,449.2 203.0,448.3Q208,447.4 213.0,446.9Q218,446.4 223.0,446.7Q228,447.0 233.0,446.4Q238,445.7 243.0,445.0Q248,444.2 253.0,443.0Q258,441.8 263.0,440.7Q268,439.7 273.0,439.5Q278,439.2 283.0,439.6Q288,440.1 293.0,441.0Q298,441.9 303.0,441.7Q308,441.5 313.0,441.9Q318,442.3 323.0,442.2Q328,442.2 333.0,443.1Q338,444.1 343.0,445.0Q348,445.8 353.0,446.9Q358,448.1 363.0,448.1Q368,448.0 373.0,447.9Q378,447.8 383.0,447.9Q388,448.0 393.0,448.5Q398,448.9 403.0,450.2Q408,451.5 413.0,453.0Q418,454.5 423.0,455.3Q428,456.0 433.0,457.0Q438,458.0 443.0,459.6Q448,461.2 453.0,462.9Q458,464.7 463.0,467.2Q468,469.6 473.0,471.8Q478,474.0 483.0,475.7Q488,477.4 493.0,478.6Q498,479.8 503.0,481.3Q508,482.8 513.0,484.6Q518,486.4 523.0,488.8L528,491.3"/><path id="st2" d="M88,474.4Q98,471.5 103.0,470.0Q108,468.5 113.0,467.5Q118,466.5 123.0,465.8Q128,465.1 133.0,465.4Q138,465.7 143.0,466.0Q148,466.4 153.0,465.8Q158,465.2 163.0,464.2Q168,463.3 173.0,462.3Q178,461.3 183.0,460.2Q188,459.1 193.0,458.7Q198,458.2 203.0,457.9Q208,457.5 213.0,456.6Q218,455.6 223.0,454.5Q228,453.3 233.0,452.5Q238,451.6 243.0,451.4Q248,451.1 253.0,451.7Q258,452.3 263.0,452.7Q268,453.0 273.0,453.0Q278,453.0 283.0,452.9Q288,452.7 293.0,452.7Q298,452.8 303.0,452.9Q308,453.0 313.0,453.8Q318,454.6 323.0,455.4Q328,456.1 333.0,456.3Q338,456.5 343.0,455.9Q348,455.4 353.0,455.6Q358,455.9 363.0,456.0Q368,456.2 373.0,457.0Q378,457.9 383.0,459.0Q388,460.2 393.0,461.4Q398,462.7 403.0,463.0Q408,463.4 413.0,464.2Q418,465.0 423.0,466.7Q428,468.3 433.0,470.8Q438,473.3 443.0,475.2Q448,477.1 453.0,478.9Q458,480.7 463.0,481.5Q468,482.2 473.0,483.4Q478,484.5 483.0,485.8Q488,487.1 493.0,488.8Q498,490.6 503.0,492.6Q508,494.7 513.0,496.0Q518,497.4 523.0,498.6L528,499.8M88,481.5Q98,479.9 103.0,479.3Q108,478.8 113.0,477.6Q118,476.4 123.0,475.2Q128,474.0 133.0,473.9Q138,473.8 143.0,474.3Q148,474.8 153.0,475.1Q158,475.5 163.0,475.3Q168,475.1 173.0,474.5Q178,473.9 183.0,472.8Q188,471.7 193.0,470.8Q198,469.9 203.0,469.2Q208,468.4 213.0,468.3Q218,468.3 223.0,467.7Q228,467.1 233.0,466.0Q238,464.9 243.0,464.1Q248,463.4 253.0,462.9Q258,462.5 263.0,463.4Q268,464.2 273.0,464.6Q278,465.1 283.0,465.6Q288,466.1 293.0,466.2Q298,466.4 303.0,466.4Q308,466.5 313.0,466.4Q318,466.3 323.0,467.2Q328,468.1 333.0,468.9Q338,469.8 343.0,470.6Q348,471.3 353.0,471.3Q358,471.2 363.0,471.3Q368,471.4 373.0,472.3Q378,473.2 383.0,474.2Q388,475.3 393.0,476.8Q398,478.3 403.0,479.1Q408,479.8 413.0,480.7Q418,481.6 423.0,482.1Q428,482.6 433.0,484.6Q438,486.6 443.0,488.4Q448,490.2 453.0,492.6Q458,495.0 463.0,496.8Q468,498.6 473.0,500.1Q478,501.5 483.0,502.4Q488,503.2 493.0,504.9Q498,506.5 503.0,508.2Q508,509.9 513.0,511.6Q518,513.3 523.0,515.3L528,517.2M88,490.0Q98,487.7 103.0,487.5Q108,487.4 113.0,487.1Q118,486.9 123.0,487.2Q128,487.5 133.0,487.3Q138,487.2 143.0,486.7Q148,486.3 153.0,485.2Q158,484.1 163.0,483.8Q168,483.5 173.0,483.2Q178,482.9 183.0,482.9Q188,483.0 193.0,481.7Q198,480.4 203.0,479.4Q208,478.4 213.0,476.9Q218,475.5 223.0,475.0Q228,474.5 233.0,474.9Q238,475.2 243.0,476.0Q248,476.7 253.0,477.0Q258,477.2 263.0,477.5Q268,477.7 273.0,477.9Q278,478.0 283.0,479.0Q288,479.9 293.0,480.3Q298,480.8 303.0,481.4Q308,482.0 313.0,482.2Q318,482.5 323.0,482.0Q328,481.6 333.0,481.4Q338,481.2 343.0,481.2Q348,481.1 353.0,482.4Q358,483.6 363.0,485.1Q368,486.5 373.0,488.0Q378,489.5 383.0,490.4Q388,491.3 393.0,492.2Q398,493.2 403.0,494.8Q408,496.4 413.0,498.1Q418,499.7 423.0,501.5Q428,503.2 433.0,504.4Q438,505.5 443.0,505.8Q448,506.1 453.0,507.1Q458,508.1 463.0,509.1Q468,510.2 473.0,511.9Q478,513.6 483.0,516.0Q488,518.5 493.0,519.7Q498,521.0 503.0,522.3Q508,523.6 513.0,525.2Q518,526.9 523.0,529.1L528,531.3M88,499.8Q98,497.6 103.0,496.6Q108,495.6 113.0,495.0Q118,494.3 123.0,494.2Q128,494.1 133.0,494.2Q138,494.2 143.0,493.9Q148,493.5 153.0,493.2Q158,492.9 163.0,492.8Q168,492.8 173.0,492.9Q178,493.0 183.0,493.5Q188,494.1 193.0,494.2Q198,494.3 203.0,493.6Q208,492.9 213.0,491.1Q218,489.4 223.0,488.1Q228,486.7 233.0,486.5Q238,486.2 243.0,486.2Q248,486.2 253.0,486.5Q258,486.8 263.0,487.5Q268,488.2 273.0,488.3Q278,488.5 283.0,489.2Q288,489.9 293.0,491.3Q298,492.6 303.0,494.2Q308,495.9 313.0,497.2Q318,498.5 323.0,498.7Q328,498.9 333.0,499.1Q338,499.4 343.0,499.3Q348,499.3 353.0,499.8Q358,500.2 363.0,501.5Q368,502.7 373.0,504.0Q378,505.2 383.0,505.7Q388,506.2 393.0,507.0Q398,507.9 403.0,508.8Q408,509.7 413.0,511.1Q418,512.5 423.0,514.2Q428,516.0 433.0,517.4Q438,518.8 443.0,520.4Q448,522.0 453.0,522.8Q458,523.7 463.0,524.7Q468,525.6 473.0,527.7Q478,529.7 483.0,532.4Q488,535.1 493.0,537.1Q498,539.1 503.0,541.0Q508,543.0 513.0,544.7Q518,546.4 523.0,548.0L528,549.6M88,506.8Q98,507.5 103.0,507.2Q108,507.0 113.0,506.2Q118,505.5 123.0,505.4Q128,505.2 133.0,505.2Q138,505.2 143.0,505.0Q148,504.7 153.0,503.8Q158,502.9 163.0,501.8Q168,500.8 173.0,500.2Q178,499.5 183.0,499.4Q188,499.3 193.0,499.4Q198,499.6 203.0,500.0Q208,500.4 213.0,500.2Q218,500.0 223.0,499.2Q228,498.4 233.0,497.9Q238,497.4 243.0,498.0Q248,498.6 253.0,499.5Q258,500.4 263.0,501.4Q268,502.5 273.0,503.5Q278,504.5 283.0,505.0Q288,505.4 293.0,506.5Q298,507.7 303.0,508.6Q308,509.5 313.0,510.9Q318,512.2 323.0,513.2Q328,514.3 333.0,514.2Q338,514.1 343.0,513.7Q348,513.4 353.0,513.3Q358,513.3 363.0,514.1Q368,515.0 373.0,516.6Q378,518.2 383.0,520.1Q388,522.0 393.0,523.1Q398,524.1 403.0,525.7Q408,527.2 413.0,528.3Q418,529.4 423.0,531.0Q428,532.7 433.0,534.6Q438,536.5 443.0,537.6Q448,538.7 453.0,539.4Q458,540.1 463.0,540.5Q468,540.9 473.0,541.8Q478,542.6 483.0,544.3Q488,546.1 493.0,548.7Q498,551.4 503.0,554.5Q508,557.6 513.0,560.4Q518,563.1 523.0,565.3L528,567.5M88,512.3Q98,512.4 103.0,512.3Q108,512.2 113.0,512.9Q118,513.6 123.0,514.1Q128,514.5 133.0,514.5Q138,514.4 143.0,513.7Q148,512.9 153.0,511.4Q158,509.8 163.0,509.4Q168,508.9 173.0,509.5Q178,510.1 183.0,510.5Q188,510.9 193.0,510.7Q198,510.4 203.0,510.2Q208,510.0 213.0,509.8Q218,509.6 223.0,509.6Q228,509.6 233.0,510.2Q238,510.8 243.0,511.5Q248,512.2 253.0,512.5Q258,512.8 263.0,512.9Q268,513.1 273.0,513.7Q278,514.2 283.0,515.7Q288,517.1 293.0,519.1Q298,521.2 303.0,523.5Q308,525.9 313.0,527.3Q318,528.8 323.0,529.1Q328,529.5 333.0,529.9Q338,530.3 343.0,530.4Q348,530.6 353.0,530.9Q358,531.1 363.0,531.7Q368,532.2 373.0,532.3Q378,532.3 383.0,532.9Q388,533.5 393.0,534.0Q398,534.6 403.0,536.0Q408,537.4 413.0,539.8Q418,542.3 423.0,545.0Q428,547.8 433.0,549.5Q438,551.2 443.0,552.6Q448,553.9 453.0,554.7Q458,555.4 463.0,557.0Q468,558.7 473.0,560.5Q478,562.3 483.0,564.0Q488,565.7 493.0,567.9Q498,570.0 503.0,571.7Q508,573.4 513.0,576.0Q518,578.5 523.0,581.6L528,584.7M88,520.0Q98,520.7 103.0,521.2Q108,521.6 113.0,521.7Q118,521.8 123.0,521.5Q128,521.2 133.0,520.4Q138,519.7 143.0,518.6Q148,517.4 153.0,517.3Q158,517.1 163.0,517.1Q168,517.0 173.0,517.3Q178,517.6 183.0,517.9Q188,518.2 193.0,518.4Q198,518.7 203.0,519.4Q208,520.2 213.0,521.1Q218,522.0 223.0,523.9Q228,525.7 233.0,526.5Q238,527.3 243.0,527.6Q248,527.9 253.0,527.7Q258,527.5 263.0,527.4Q268,527.2 273.0,527.7Q278,528.1 283.0,529.5Q288,530.9 293.0,532.1Q298,533.2 303.0,534.6Q308,536.0 313.0,537.5Q318,538.9 323.0,540.1Q328,541.4 333.0,543.1Q338,544.7 343.0,546.4Q348,548.0 353.0,549.2Q358,550.3 363.0,550.3Q368,550.2 373.0,549.5Q378,548.9 383.0,548.6Q388,548.4 393.0,548.9Q398,549.3 403.0,550.4Q408,551.6 413.0,553.3Q418,555.0 423.0,556.9Q428,558.7 433.0,560.0Q438,561.4 443.0,563.7Q448,566.0 453.0,568.2Q458,570.5 463.0,573.2Q468,575.9 473.0,578.5Q478,581.2 483.0,582.8Q488,584.5 493.0,586.6Q498,588.7 503.0,590.8Q508,592.9 513.0,595.6Q518,598.3 523.0,601.6L528,604.8M88,525.1Q98,525.7 103.0,526.3Q108,526.9 113.0,527.1Q118,527.2 123.0,527.7Q128,528.1 133.0,528.4Q138,528.6 143.0,529.3Q148,530.1 153.0,530.6Q158,531.1 163.0,530.8Q168,530.5 173.0,529.3Q178,528.2 183.0,527.5Q188,526.8 193.0,526.5Q198,526.2 203.0,527.2Q208,528.2 213.0,529.8Q218,531.5 223.0,533.1Q228,534.7 233.0,535.9Q238,537.1 243.0,538.1Q248,539.1 253.0,540.5Q258,542.0 263.0,543.8Q268,545.6 273.0,547.0Q278,548.3 283.0,548.9Q288,549.5 293.0,549.4Q298,549.4 303.0,549.9Q308,550.4 313.0,551.4Q318,552.4 323.0,553.8Q328,555.1 333.0,556.4Q338,557.7 343.0,559.0Q348,560.3 353.0,560.4Q358,560.4 363.0,559.9Q368,559.4 373.0,559.8Q378,560.2 383.0,561.0Q388,561.9 393.0,562.8Q398,563.8 403.0,564.8Q408,565.9 413.0,567.6Q418,569.2 423.0,571.2Q428,573.1 433.0,575.7Q438,578.3 443.0,581.5Q448,584.7 453.0,587.9Q458,591.2 463.0,593.4Q468,595.5 473.0,597.4Q478,599.3 483.0,600.0Q488,600.7 493.0,602.5Q498,604.2 503.0,606.7Q508,609.2 513.0,611.5Q518,613.8 523.0,616.5L528,619.1M88,532.3Q98,530.9 103.0,530.7Q108,530.5 113.0,531.4Q118,532.3 123.0,533.6Q128,534.8 133.0,535.4Q138,535.9 143.0,536.5Q148,537.1 153.0,537.7Q158,538.4 163.0,539.3Q168,540.2 173.0,541.2Q178,542.1 183.0,541.7Q188,541.2 193.0,540.8Q198,540.4 203.0,540.4Q208,540.5 213.0,541.3Q218,542.1 223.0,544.0Q228,545.8 233.0,547.9Q238,550.0 243.0,552.2Q248,554.5 253.0,555.8Q258,557.1 263.0,558.0Q268,559.0 273.0,560.1Q278,561.3 283.0,562.6Q288,563.8 293.0,564.7Q298,565.6 303.0,565.6Q308,565.6 313.0,565.5Q318,565.4 323.0,565.9Q328,566.4 333.0,566.7Q338,567.1 343.0,568.9Q348,570.6 353.0,571.9Q358,573.1 363.0,573.9Q368,574.8 373.0,575.0Q378,575.3 383.0,575.5Q388,575.8 393.0,576.8Q398,577.8 403.0,578.8Q408,579.9 413.0,582.3Q418,584.7 423.0,586.6Q428,588.5 433.0,590.7Q438,592.9 443.0,595.9Q448,598.9 453.0,602.0Q458,605.0 463.0,608.5Q468,612.0 473.0,615.3Q478,618.5 483.0,620.8Q488,623.2 493.0,624.4Q498,625.6 503.0,626.5Q508,627.3 513.0,628.6Q518,629.8 523.0,632.5L528,635.2M88,546.3Q98,542.9 103.0,541.9Q108,540.9 113.0,540.4Q118,540.0 123.0,540.2Q128,540.4 133.0,541.4Q138,542.3 143.0,543.2Q148,544.0 153.0,544.7Q158,545.4 163.0,546.3Q168,547.2 173.0,548.4Q178,549.5 183.0,551.1Q188,552.7 193.0,554.3Q198,555.9 203.0,556.5Q208,557.0 213.0,557.7Q218,558.5 223.0,559.7Q228,560.9 233.0,562.7Q238,564.5 243.0,566.6Q248,568.7 253.0,571.1Q258,573.5 263.0,574.5Q268,575.6 273.0,576.0Q278,576.3 283.0,576.0Q288,575.8 293.0,575.8Q298,575.8 303.0,576.0Q308,576.2 313.0,576.0Q318,575.9 323.0,576.1Q328,576.4 333.0,576.6Q338,576.8 343.0,578.2Q348,579.6 353.0,581.3Q358,583.1 363.0,585.9Q368,588.7 373.0,590.8Q378,592.9 383.0,594.5Q388,596.1 393.0,596.4Q398,596.8 403.0,597.6Q408,598.4 413.0,599.5Q418,600.5 423.0,602.3Q428,604.0 433.0,605.6Q438,607.3 443.0,609.9Q448,612.5 453.0,614.9Q458,617.3 463.0,620.5Q468,623.6 473.0,627.4Q478,631.2 483.0,634.7Q488,638.3 493.0,641.8Q498,645.3 503.0,647.2Q508,649.0 513.0,650.1Q518,651.2 523.0,652.3L528,653.4M88,554.9Q98,551.9 103.0,550.4Q108,548.9 113.0,547.9Q118,546.8 123.0,546.8Q128,546.9 133.0,548.1Q138,549.4 143.0,550.9Q148,552.4 153.0,554.6Q158,556.7 163.0,558.3Q168,559.8 173.0,561.9Q178,563.9 183.0,566.1Q188,568.4 193.0,570.7Q198,573.0 203.0,573.9Q208,574.8 213.0,575.1Q218,575.5 223.0,575.4Q228,575.2 233.0,575.8Q238,576.4 243.0,577.6Q248,578.9 253.0,580.2Q258,581.6 263.0,583.3Q268,584.9 273.0,586.0Q278,587.0 283.0,587.3Q288,587.5 293.0,588.2Q298,588.8 303.0,589.3Q308,589.8 313.0,590.2Q318,590.6 323.0,591.1Q328,591.7 333.0,591.6Q338,591.5 343.0,591.6Q348,591.7 353.0,593.2Q358,594.7 363.0,597.0Q368,599.3 373.0,601.7Q378,604.2 383.0,606.4Q388,608.6 393.0,610.1Q398,611.5 403.0,612.9Q408,614.2 413.0,615.3Q418,616.5 423.0,618.1Q428,619.7 433.0,622.0Q438,624.3 443.0,626.7Q448,629.1 453.0,631.8Q458,634.5 463.0,637.1Q468,639.7 473.0,642.7Q478,645.8 483.0,649.9Q488,654.0 493.0,657.0Q498,660.0 503.0,662.6Q508,665.2 513.0,666.2Q518,667.2 523.0,667.7L528,668.2M88,561.1Q98,562.2 103.0,562.7Q108,563.2 113.0,563.6Q118,563.9 123.0,564.2Q128,564.4 133.0,564.7Q138,565.0 143.0,565.3Q148,565.5 153.0,566.2Q158,567.0 163.0,569.4Q168,571.8 173.0,574.5Q178,577.2 183.0,579.3Q188,581.5 193.0,583.0Q198,584.6 203.0,585.7Q208,586.7 213.0,587.5Q218,588.3 223.0,588.9Q228,589.5 233.0,590.6Q238,591.8 243.0,592.7Q248,593.7 253.0,594.5Q258,595.3 263.0,595.5Q268,595.7 273.0,596.7Q278,597.8 283.0,599.0Q288,600.2 293.0,601.5Q298,602.8 303.0,603.0Q308,603.3 313.0,603.3Q318,603.4 323.0,602.6Q328,601.9 333.0,601.4Q338,600.9 343.0,601.8Q348,602.7 353.0,604.2Q358,605.7 363.0,608.4Q368,611.1 373.0,613.4Q378,615.6 383.0,618.4Q388,621.1 393.0,624.1Q398,627.1 403.0,629.9Q408,632.8 413.0,635.9Q418,639.0 423.0,640.6Q428,642.1 433.0,642.9Q438,643.8 443.0,644.6Q448,645.3 453.0,646.6Q458,647.8 463.0,649.8Q468,651.8 473.0,654.6Q478,657.4 483.0,660.1Q488,662.8 493.0,665.6Q498,668.4 503.0,670.5Q508,672.5 513.0,674.6Q518,676.6 523.0,679.1L528,681.6M88,570.4Q98,573.1 103.0,574.1Q108,575.2 113.0,575.4Q118,575.7 123.0,575.6Q128,575.4 133.0,575.5Q138,575.7 143.0,576.6Q148,577.5 153.0,579.5Q158,581.4 163.0,584.0Q168,586.5 173.0,589.0Q178,591.5 183.0,593.6Q188,595.7 193.0,597.6Q198,599.4 203.0,601.4Q208,603.5 213.0,605.1Q218,606.8 223.0,607.1Q228,607.4 233.0,607.0Q238,606.5 243.0,605.5Q248,604.5 253.0,603.3Q258,602.2 263.0,602.6Q268,603.0 273.0,604.2Q278,605.4 283.0,606.9Q288,608.3 293.0,609.6Q298,610.8 303.0,611.9Q308,613.0 313.0,614.0Q318,615.0 323.0,616.7Q328,618.4 333.0,619.9Q338,621.3 343.0,621.9Q348,622.4 353.0,623.4Q358,624.4 363.0,624.7Q368,625.1 373.0,626.4Q378,627.6 383.0,630.1Q388,632.6 393.0,636.1Q398,639.6 403.0,642.6Q408,645.6 413.0,647.7Q418,649.8 423.0,651.8Q428,653.7 433.0,655.5Q438,657.3 443.0,659.4Q448,661.5 453.0,663.1Q458,664.7 463.0,666.6Q468,668.5 473.0,669.6Q478,670.8 483.0,672.2Q488,673.6 493.0,675.6Q498,677.6 503.0,680.3Q508,683.1 513.0,685.9Q518,688.6 523.0,690.5L528,692.3M88,576.0Q98,580.5 103.0,583.4Q108,586.2 113.0,588.9Q118,591.5 123.0,593.0Q128,594.4 133.0,595.4Q138,596.3 143.0,596.9Q148,597.4 153.0,598.6Q158,599.9 163.0,601.0Q168,602.2 173.0,604.0Q178,605.8 183.0,606.8Q188,607.9 193.0,608.7Q198,609.6 203.0,610.8Q208,612.1 213.0,613.1Q218,614.2 223.0,615.4Q228,616.7 233.0,617.3Q238,617.9 243.0,618.0Q248,618.1 253.0,617.6Q258,617.0 263.0,616.4Q268,615.8 273.0,616.4Q278,617.0 283.0,618.6Q288,620.1 293.0,621.9Q298,623.6 303.0,625.3Q308,627.0 313.0,627.9Q318,628.9 323.0,629.8Q328,630.8 333.0,632.4Q338,634.0 343.0,635.2Q348,636.4 353.0,637.2Q358,638.0 363.0,639.2Q368,640.4 373.0,641.2Q378,642.1 383.0,643.6Q388,645.1 393.0,648.2Q398,651.2 403.0,655.1Q408,658.9 413.0,662.3Q418,665.7 423.0,668.5Q428,671.4 433.0,673.2Q438,674.9 443.0,676.3Q448,677.7 453.0,678.9Q458,680.0 463.0,680.9Q468,681.9 473.0,682.6Q478,683.3 483.0,683.2Q488,683.0 493.0,683.6Q498,684.2 503.0,685.8Q508,687.3 513.0,689.7Q518,692.2 523.0,695.2L528,698.2M88,591.2Q98,595.4 103.0,598.0Q108,600.5 113.0,602.5Q118,604.5 123.0,605.8Q128,607.1 133.0,608.3Q138,609.5 143.0,610.3Q148,611.1 153.0,611.8Q158,612.5 163.0,613.8Q168,615.0 173.0,616.0Q178,616.9 183.0,617.7Q188,618.4 193.0,619.4Q198,620.5 203.0,622.4Q208,624.4 213.0,626.3Q218,628.1 223.0,630.0Q228,631.8 233.0,632.7Q238,633.6 243.0,633.0Q248,632.4 253.0,631.4Q258,630.3 263.0,629.5Q268,628.7 273.0,628.6Q278,628.6 283.0,629.2Q288,629.8 293.0,630.7Q298,631.6 303.0,632.5Q308,633.5 313.0,635.4Q318,637.3 323.0,640.0Q328,642.7 333.0,645.9Q338,649.0 343.0,652.2Q348,655.3 353.0,657.0Q358,658.8 363.0,659.6Q368,660.4 373.0,661.1Q378,661.9 383.0,663.2Q388,664.6 393.0,666.0Q398,667.4 403.0,669.7Q408,672.1 413.0,673.6Q418,675.2 423.0,677.0Q428,678.7 433.0,680.3Q438,681.9 443.0,684.2Q448,686.5 453.0,688.1Q458,689.7 463.0,691.3Q468,692.9 473.0,693.5Q478,694.2 483.0,694.6Q488,695.1 493.0,695.9Q498,696.7 503.0,698.3Q508,699.8 513.0,702.4Q518,705.0 523.0,707.9L528,710.8"/><path id="ps" d="M202,662.3Q312,589.7 422,662.3M202,673.9Q312,593.3 422,673.9M202,685.6Q312,596.8 422,685.6M202,697.2Q312,600.4 422,697.2M202,708.9Q312,603.9 422,708.9M202,720.5Q312,607.5 422,720.5M202,732.2Q312,611.0 422,732.2M202,742.1Q312,616.3 422,742.1M202,749.7Q312,623.9 422,749.7M202,757.3Q312,631.5 422,757.3M202,764.9Q312,639.1 422,764.9M202,772.5Q312,646.7 422,772.5M202,780.1Q312,654.3 422,780.1M202,787.7Q312,661.9 422,787.7M202,795.3Q312,669.5 422,795.3M202,802.9Q312,677.1 422,802.9M202,810.5Q312,684.7 422,810.5M202,818.1Q312,692.3 422,818.1M202,825.7Q312,699.9 422,825.7"/></defs>
<g clip-path="url(#cbody)"><use href="#st" stroke="#cd6b32" stroke-width="3.2" transform="translate(0,3.9)"/>
<use href="#st" stroke="#86380c" stroke-width="4.6"/>
<use href="#st2" stroke="#cd6b32" stroke-width="3.8" transform="translate(0,4.7)"/>
<use href="#st2" stroke="#86380c" stroke-width="5.6"/></g>
<g clip-path="url(#cped)"><use href="#ps" stroke="#cd6b32" stroke-width="2.2" transform="translate(0,2.7)"/>
<use href="#ps" stroke="#86380c" stroke-width="3.1"/>
<path d="M222,694 Q312,712 400,693" stroke="#7a3208" stroke-width="1.6"/><path d="M222,695.8 Q312,713.8 400,694.8" stroke="#dc7b40" stroke-width="1.4"/></g>
</g>
<rect x="90" y="50" width="440" height="690" fill="url(#shade)" stroke="none"/>
<g filter="url(#soft3)">
<path d="M352,62L372,83 390,115 404,152 408,167 400,202 398,220 404,228 398,255 378,284 372,286 370,250 366,200 368,150 362,100Z" fill="#000" opacity="0.2"/>
<path d="M252,246 L392,246 388,270 376,290 420,300 440,330 300,318 215,306 243,294 232,274Z" fill="#000" opacity="0.1"/>
<path d="M248,120 C240,160 246,230 262,290" fill="none" stroke="#5a2504" stroke-width="4" opacity="0.3"/>
<path d="M296,160L304,160 310,200 300,206 290,200Z" fill="#5a2504" opacity="0.28"/>
<path d="M262,163h26M318,163h28" stroke="#4a1d02" stroke-width="2.5" opacity="0.35"/>
<path d="M382,300 C372,360 330,420 262,470" fill="none" stroke="#5a2504" stroke-width="2.5" opacity="0.45"/>
<path d="M418,300 C440,350 430,430 395,520" fill="none" stroke="#5a2504" stroke-width="6" opacity="0.22"/>
</g>
</g>
<path d="M196,716.3A113,9.8 0 0 0 422,716.3" fill="none" stroke="#1f8a77" stroke-width="1.5"/>
</svg>
<div class="abs" style="left:0;top:4px;width:202px;height:251px;background:#595959"></div>
<div class="abs" style="left:0;top:30px;width:198px;height:1px;background:#cf8558"></div>
<div class="abs" style="left:0;top:209px;width:198px;height:1px;background:#cf8558"></div>
<div class="abs" style="left:34.2px;top:36.6px;width:21.2px;height:10.8px;background:#f47f3a"></div>
<div class="abs" style="left:34.2px;top:55.6px;width:16.5px;height:10.8px;background:#f47f3a"></div>
<div class="abs" style="left:34.2px;top:74.8px;width:29.8px;height:10.8px;background:#f47f3a"></div>
<div class="abs" style="left:34.2px;top:93.6px;width:25.9px;height:10.8px;background:#f47f3a"></div>
<div class="abs" style="left:34.2px;top:112.6px;width:1.0px;height:10.8px;background:#f47f3a"></div>
<div class="abs" style="left:34.2px;top:131.6px;width:1.0px;height:10.8px;background:#f47f3a"></div>
<div class="abs" style="left:34.2px;top:150.6px;width:1.0px;height:10.8px;background:#f47f3a"></div>
<div class="abs" style="left:34.2px;top:169.6px;width:1.0px;height:10.8px;background:#f47f3a"></div>
<svg class="abs" style="left:624px;top:0" width="114" height="913" viewBox="624 0 114 913"><rect x="676.8" y="14" width="2.3" height="875" fill="#d8854e"/><rect x="679.1" y="14" width="1" height="875" fill="#f0c8aa"/><polygon points="678.5,9.5 685,15.8 672,15.8" fill="#dd7236"/><polygon points="678.5,894 685,887.4 672,887.4" fill="#dd7236"/><path d="M667,885.8h2.3M687,885.8h2.3M667,882.3h2.3M687,882.3h2.3M667,878.8h2.3M687,878.8h2.3M667,875.3h2.3M687,875.3h2.3M667,871.8h2.3M687,871.8h2.3M667,868.3h2.3M687,868.3h2.3M667,864.9h2.3M687,864.9h2.3M667,861.4h2.3M687,861.4h2.3M667,857.9h2.3M687,857.9h2.3M664.3,854.4h5M687,854.4h5.3M667,850.9h2.3M687,850.9h2.3M667,847.4h2.3M687,847.4h2.3M667,843.9h2.3M687,843.9h2.3M667,840.5h2.3M687,840.5h2.3M667,837.0h2.3M687,837.0h2.3M667,833.5h2.3M687,833.5h2.3M667,830.0h2.3M687,830.0h2.3M667,826.5h2.3M687,826.5h2.3M667,823.0h2.3M687,823.0h2.3M664.3,819.6h5M687,819.6h5.3M667,816.1h2.3M687,816.1h2.3M667,812.6h2.3M687,812.6h2.3M667,809.1h2.3M687,809.1h2.3M667,805.6h2.3M687,805.6h2.3M667,802.1h2.3M687,802.1h2.3M667,798.7h2.3M687,798.7h2.3M667,795.2h2.3M687,795.2h2.3M667,791.7h2.3M687,791.7h2.3M667,788.2h2.3M687,788.2h2.3M664.3,784.7h5M687,784.7h5.3M667,781.2h2.3M687,781.2h2.3M667,777.8h2.3M687,777.8h2.3M667,774.3h2.3M687,774.3h2.3M667,770.8h2.3M687,770.8h2.3M667,767.3h2.3M687,767.3h2.3M667,763.8h2.3M687,763.8h2.3M667,760.3h2.3M687,760.3h2.3M667,756.8h2.3M687,756.8h2.3M667,753.4h2.3M687,753.4h2.3M664.3,749.9h5M687,749.9h5.3M667,746.4h2.3M687,746.4h2.3M667,742.9h2.3M687,742.9h2.3M667,739.4h2.3M687,739.4h2.3M667,735.9h2.3M687,735.9h2.3M667,732.5h2.3M687,732.5h2.3M667,729.0h2.3M687,729.0h2.3M667,725.5h2.3M687,725.5h2.3M667,722.0h2.3M687,722.0h2.3M667,718.5h2.3M687,718.5h2.3M664.3,715.0h5M687,715.0h5.3M667,711.6h2.3M687,711.6h2.3M667,708.1h2.3M687,708.1h2.3M667,704.6h2.3M687,704.6h2.3M667,701.1h2.3M687,701.1h2.3M667,697.6h2.3M687,697.6h2.3M667,694.1h2.3M687,694.1h2.3M667,690.7h2.3M687,690.7h2.3M667,687.2h2.3M687,687.2h2.3M667,683.7h2.3M687,683.7h2.3M664.3,680.2h5M687,680.2h5.3M667,676.7h2.3M687,676.7h2.3M667,673.2h2.3M687,673.2h2.3M667,669.7h2.3M687,669.7h2.3M667,666.3h2.3M687,666.3h2.3M667,662.8h2.3M687,662.8h2.3M667,659.3h2.3M687,659.3h2.3M667,655.8h2.3M687,655.8h2.3M667,652.3h2.3M687,652.3h2.3M667,648.8h2.3M687,648.8h2.3M664.3,645.4h5M687,645.4h5.3M667,641.9h2.3M687,641.9h2.3M667,638.4h2.3M687,638.4h2.3M667,634.9h2.3M687,634.9h2.3M667,631.4h2.3M687,631.4h2.3M667,627.9h2.3M687,627.9h2.3M667,624.5h2.3M687,624.5h2.3M667,621.0h2.3M687,621.0h2.3M667,617.5h2.3M687,617.5h2.3M667,614.0h2.3M687,614.0h2.3M664.3,610.5h5M687,610.5h5.3M667,607.0h2.3M687,607.0h2.3M667,603.6h2.3M687,603.6h2.3M667,600.1h2.3M687,600.1h2.3M667,596.6h2.3M687,596.6h2.3M667,593.1h2.3M687,593.1h2.3M667,589.6h2.3M687,589.6h2.3M667,586.1h2.3M687,586.1h2.3M667,582.6h2.3M687,582.6h2.3M667,579.2h2.3M687,579.2h2.3M664.3,575.7h5M687,575.7h5.3M667,572.2h2.3M687,572.2h2.3M667,568.7h2.3M687,568.7h2.3M667,565.2h2.3M687,565.2h2.3M667,561.7h2.3M687,561.7h2.3M667,558.3h2.3M687,558.3h2.3M667,554.8h2.3M687,554.8h2.3M667,551.3h2.3M687,551.3h2.3M667,547.8h2.3M687,547.8h2.3M667,544.3h2.3M687,544.3h2.3M664.3,540.8h5M687,540.8h5.3M667,537.4h2.3M687,537.4h2.3M667,533.9h2.3M687,533.9h2.3M667,530.4h2.3M687,530.4h2.3M667,526.9h2.3M687,526.9h2.3M667,523.4h2.3M687,523.4h2.3M667,519.9h2.3M687,519.9h2.3M667,516.5h2.3M687,516.5h2.3M667,513.0h2.3M687,513.0h2.3M667,509.5h2.3M687,509.5h2.3M664.3,506.0h5M687,506.0h5.3M667,502.5h2.3M687,502.5h2.3M667,499.0h2.3M687,499.0h2.3M667,495.5h2.3M687,495.5h2.3M667,492.1h2.3M687,492.1h2.3M667,488.6h2.3M687,488.6h2.3M667,485.1h2.3M687,485.1h2.3M667,481.6h2.3M687,481.6h2.3M667,478.1h2.3M687,478.1h2.3M667,474.6h2.3M687,474.6h2.3M664.3,471.2h5M687,471.2h5.3M667,467.7h2.3M687,467.7h2.3M667,464.2h2.3M687,464.2h2.3M667,460.7h2.3M687,460.7h2.3M667,457.2h2.3M687,457.2h2.3M667,453.7h2.3M687,453.7h2.3M667,450.3h2.3M687,450.3h2.3M667,446.8h2.3M687,446.8h2.3M667,443.3h2.3M687,443.3h2.3M667,439.8h2.3M687,439.8h2.3M664.3,436.3h5M687,436.3h5.3M667,432.8h2.3M687,432.8h2.3M667,429.4h2.3M687,429.4h2.3M667,425.9h2.3M687,425.9h2.3M667,422.4h2.3M687,422.4h2.3M667,418.9h2.3M687,418.9h2.3M667,415.4h2.3M687,415.4h2.3M667,411.9h2.3M687,411.9h2.3M667,408.4h2.3M687,408.4h2.3M667,405.0h2.3M687,405.0h2.3M664.3,401.5h5M687,401.5h5.3M667,398.0h2.3M687,398.0h2.3M667,394.5h2.3M687,394.5h2.3M667,391.0h2.3M687,391.0h2.3M667,387.5h2.3M687,387.5h2.3M667,384.1h2.3M687,384.1h2.3M667,380.6h2.3M687,380.6h2.3M667,377.1h2.3M687,377.1h2.3M667,373.6h2.3M687,373.6h2.3M667,370.1h2.3M687,370.1h2.3M664.3,366.6h5M687,366.6h5.3M667,363.2h2.3M687,363.2h2.3M667,359.7h2.3M687,359.7h2.3M667,356.2h2.3M687,356.2h2.3M667,352.7h2.3M687,352.7h2.3M667,349.2h2.3M687,349.2h2.3M667,345.7h2.3M687,345.7h2.3M667,342.3h2.3M687,342.3h2.3M667,338.8h2.3M687,338.8h2.3M667,335.3h2.3M687,335.3h2.3M664.3,331.8h5M687,331.8h5.3M667,328.3h2.3M687,328.3h2.3M667,324.8h2.3M687,324.8h2.3M667,321.3h2.3M687,321.3h2.3M667,317.9h2.3M687,317.9h2.3M667,314.4h2.3M687,314.4h2.3M667,310.9h2.3M687,310.9h2.3M667,307.4h2.3M687,307.4h2.3M667,303.9h2.3M687,303.9h2.3M667,300.4h2.3M687,300.4h2.3M664.3,297.0h5M687,297.0h5.3M667,293.5h2.3M687,293.5h2.3M667,290.0h2.3M687,290.0h2.3M667,286.5h2.3M687,286.5h2.3M667,283.0h2.3M687,283.0h2.3M667,279.5h2.3M687,279.5h2.3M667,276.1h2.3M687,276.1h2.3M667,272.6h2.3M687,272.6h2.3M667,269.1h2.3M687,269.1h2.3M667,265.6h2.3M687,265.6h2.3M664.3,262.1h5M687,262.1h5.3M667,258.6h2.3M687,258.6h2.3M667,255.2h2.3M687,255.2h2.3M667,251.7h2.3M687,251.7h2.3M667,248.2h2.3M687,248.2h2.3M667,244.7h2.3M687,244.7h2.3M667,241.2h2.3M687,241.2h2.3M667,237.7h2.3M687,237.7h2.3M667,234.2h2.3M687,234.2h2.3M667,230.8h2.3M687,230.8h2.3M664.3,227.3h5M687,227.3h5.3M667,223.8h2.3M687,223.8h2.3M667,220.3h2.3M687,220.3h2.3M667,216.8h2.3M687,216.8h2.3M667,213.3h2.3M687,213.3h2.3M667,209.9h2.3M687,209.9h2.3M667,206.4h2.3M687,206.4h2.3M667,202.9h2.3M687,202.9h2.3M667,199.4h2.3M687,199.4h2.3M667,195.9h2.3M687,195.9h2.3M664.3,192.4h5M687,192.4h5.3M667,189.0h2.3M687,189.0h2.3M667,185.5h2.3M687,185.5h2.3M667,182.0h2.3M687,182.0h2.3M667,178.5h2.3M687,178.5h2.3M667,175.0h2.3M687,175.0h2.3M667,171.5h2.3M687,171.5h2.3M667,168.1h2.3M687,168.1h2.3M667,164.6h2.3M687,164.6h2.3M667,161.1h2.3M687,161.1h2.3M664.3,157.6h5M687,157.6h5.3M667,154.1h2.3M687,154.1h2.3M667,150.6h2.3M687,150.6h2.3M667,147.1h2.3M687,147.1h2.3M667,143.7h2.3M687,143.7h2.3M667,140.2h2.3M687,140.2h2.3M667,136.7h2.3M687,136.7h2.3M667,133.2h2.3M687,133.2h2.3M667,129.7h2.3M687,129.7h2.3M667,126.2h2.3M687,126.2h2.3M664.3,122.8h5M687,122.8h5.3M667,119.3h2.3M687,119.3h2.3M667,115.8h2.3M687,115.8h2.3M667,112.3h2.3M687,112.3h2.3M667,108.8h2.3M687,108.8h2.3M667,105.3h2.3M687,105.3h2.3M667,101.9h2.3M687,101.9h2.3M667,98.4h2.3M687,98.4h2.3M667,94.9h2.3M687,94.9h2.3M667,91.4h2.3M687,91.4h2.3M664.3,87.9h5M687,87.9h5.3M667,84.4h2.3M687,84.4h2.3M667,81.0h2.3M687,81.0h2.3M667,77.5h2.3M687,77.5h2.3M667,74.0h2.3M687,74.0h2.3M667,70.5h2.3M687,70.5h2.3M667,67.0h2.3M687,67.0h2.3M667,63.5h2.3M687,63.5h2.3M667,60.0h2.3M687,60.0h2.3M667,56.6h2.3M687,56.6h2.3M664.3,53.1h5M687,53.1h5.3M667,49.6h2.3M687,49.6h2.3M667,46.1h2.3M687,46.1h2.3M667,42.6h2.3M687,42.6h2.3M667,39.1h2.3M687,39.1h2.3M667,35.7h2.3M687,35.7h2.3M667,32.2h2.3M687,32.2h2.3M667,28.7h2.3M687,28.7h2.3M667,25.2h2.3M687,25.2h2.3M667,21.7h2.3M687,21.7h2.3M664.3,18.2h5M687,18.2h5.3" stroke="#8f8f8f" stroke-width="1.1" fill="none"/><path d="M674.7,908v-5.2a2.2,2.2 0 0 1 2.2,-2.2h2.9a2.2,2.2 0 0 1 2.2,2.2v1.3" fill="none" stroke="#cc6a3c" stroke-width="2.3"/><rect x="672.3" y="907" width="12" height="8" rx="1" fill="#e0641c"/><polygon points="676.6,909 680.4,911 676.6,913" fill="#fbe3d3"/></svg>
<svg class="abs" style="left:714.0px;top:897.8px" width="18" height="18" viewBox="714.0 897.8 18 18"><path d="M728.92,907.79L729.78,908.55L729.03,910.35L727.88,910.28L726.48,911.68L726.55,912.83L724.75,913.58L723.99,912.72L722.01,912.72L721.25,913.58L719.45,912.83L719.52,911.68L718.12,910.28L716.97,910.35L716.22,908.55L717.08,907.79L717.08,905.81L716.22,905.05L716.97,903.25L718.12,903.32L719.52,901.92L719.45,900.77L721.25,900.02L722.01,900.88L723.99,900.88L724.75,900.02L726.55,900.77L726.48,901.92L727.88,903.32L729.03,903.25L729.78,905.05L728.92,905.81Z" fill="#fff" stroke="#858585" stroke-width="1.25" stroke-linejoin="round"/><circle cx="723.0" cy="906.8" r="4.1" fill="#fdf6f2" stroke="#e6b8a2" stroke-width="1.2"/></svg>
<div class="box" style="left:-20px;top:879px;width:62px;height:25px;background:#fff;border-color:#5e5e5e"></div>
<div class="box" style="left:91px;top:880px;width:229.5px;height:23px;background:#e4e4e4;border-color:#7a7a7a"></div>
<svg class="chev" style="left:28.8px;top:889.0px" viewBox="0 0 9 6"><path d="M0.5,0.8 L4.5,4.8 L8.5,0.8" fill="none" stroke="#333" stroke-width="1.2"/></svg>
<svg class="chev" style="left:306.0px;top:889.0px" viewBox="0 0 9 6"><path d="M0.5,0.8 L4.5,4.8 L8.5,0.8" fill="none" stroke="#333" stroke-width="1.2"/></svg>
<svg class="abs" style="left:326px;top:882px" width="296" height="20" viewBox="326 882 296 20"><rect x="336" y="890.3" width="278" height="3" fill="#e2854a"/><polygon points="332,891.8 338.5,885.5 338.5,898.1" fill="#dd7236"/><polygon points="617.5,891.8 611,885.5 611,898.1" fill="#dd7236"/></svg>
<div class="box" style="left:738px;top:20.0px;width:340px;height:24.0px;border-color:#858585"></div>
<div class="box" style="left:738px;top:63.5px;width:340px;height:23.5px;border-color:#858585"></div>
<div class="box" style="left:738px;top:106.0px;width:340px;height:24.0px;border-color:#858585"></div>
<svg class="abs" style="left:748.0px;top:22.8px" width="18" height="18" viewBox="748.0 22.8 18 18"><path d="M762.92,32.79L763.78,33.55L763.03,35.35L761.88,35.28L760.48,36.68L760.55,37.83L758.75,38.58L757.99,37.72L756.01,37.72L755.25,38.58L753.45,37.83L753.52,36.68L752.12,35.28L750.97,35.35L750.22,33.55L751.08,32.79L751.08,30.81L750.22,30.05L750.97,28.25L752.12,28.32L753.52,26.92L753.45,25.77L755.25,25.02L756.01,25.88L757.99,25.88L758.75,25.02L760.55,25.77L760.48,26.92L761.88,28.32L763.03,28.25L763.78,30.05L762.92,30.81Z" fill="#fff" stroke="#858585" stroke-width="1.25" stroke-linejoin="round"/><circle cx="757.0" cy="31.8" r="4.1" fill="#fdf6f2" stroke="#e6b8a2" stroke-width="1.2"/></svg>
<svg class="abs" style="left:771px;top:24px" width="16" height="16" viewBox="0 0 16 16"><path d="M4.2,7.5V5a3.8,3.8 0 0 1 7.6,0V7.5" fill="none" stroke="#808080" stroke-width="2"/><rect x="1.8" y="7.2" width="12.4" height="7.4" rx="1" fill="#808080"/><polygon points="6.8,9.2 10.2,10.9 6.8,12.6" fill="#fff"/></svg>
<div class="abs" style="left:745px;top:67.3px;width:16.5px;height:15.8px;background:#ea4f14"></div><div class="abs" style="left:761.3px;top:67.3px;width:7.4px;height:15.8px;background:#f5d33a"></div><div class="abs" style="left:745px;top:67.3px;width:23.7px;height:15.8px;box-sizing:border-box;border:1px solid rgba(90,50,10,.5)"></div>
<svg class="abs" style="left:749px;top:110px" width="16" height="16" viewBox="0 0 16 16"><rect x="1.6" y="2.6" width="12.8" height="11.4" fill="#fff" stroke="#8a8a8a" stroke-width="1.1"/><path d="M2,6.5H14" stroke="#d98a66" stroke-width="1.2"/><rect x="3.6" y="4.8" width="3.6" height="3.4" fill="#d9622c"/></svg>
<svg class="abs" style="left:771px;top:111px" width="16" height="16" viewBox="0 0 16 16"><path d="M4.2,7.5V5a3.8,3.8 0 0 1 7.6,0V7.5" fill="none" stroke="#808080" stroke-width="2"/><rect x="1.8" y="7.2" width="12.4" height="7.4" rx="1" fill="#808080"/><polygon points="6.8,9.2 10.2,10.9 6.8,12.6" fill="#fff"/></svg>
<div class="box" style="left:793px;top:137.5px;width:290px;height:24px;border-color:#8d8d8d"></div>
<div class="box" style="left:777px;top:165.5px;width:80px;height:24px;border-color:#8d8d8d"></div>
<svg class="chev" style="left:843.5px;top:175.0px" viewBox="0 0 9 6"><path d="M0.5,0.8 L4.5,4.8 L8.5,0.8" fill="none" stroke="#444" stroke-width="1.2"/></svg>
<div class="box" style="left:948.5px;top:172px;width:12px;height:12px;border-color:#333"></div>
<div class="box" style="left:738.5px;top:196px;width:340px;height:275.5px;border-color:#828790;border-bottom-color:#555;border-left-color:#777"></div>
<div class="abs" style="left:739.5px;top:221px;width:334px;height:22px;background:#d9d9d9"></div>
<div class="abs" style="left:938px;top:197.5px;width:1px;height:23.5px;background:#e5e5e5"></div><div class="abs" style="left:968px;top:197.5px;width:1px;height:23.5px;background:#e5e5e5"></div>
<svg class="abs" style="left:946px;top:225px" width="16" height="14" viewBox="0 0 16 14"><path d="M1.4,7C3.2,3.9 5.5,2.8 8,2.8S12.8,3.9 14.6,7C12.8,10.1 10.500,11.2 8,11.2S3.2,10.100 1.4,7Z" fill="none" stroke="#777" stroke-width="1.5"/><circle cx="8" cy="7" r="2.3" fill="#777"/></svg>
<svg class="abs" style="left:1050px;top:223px" width="18" height="18" viewBox="0 0 18 18"><path d="M8.6,5.6H5A1.2,1.2 0 0 0 3.8,6.800V14A1.200,1.200 0 0 0 5,15.200H12A1.200,1.200 0 0 0 13.200,14V10" fill="none" stroke="#808080" stroke-width="1.3"/><circle cx="12.2" cy="6.300" r="2.500" fill="#f8d3b4" stroke="#ef9a5c" stroke-width="1.300"/></svg>
<div class="grp" style="left:738.5px;top:484.5px;width:340px;height:168px"></div>
<div class="grp" style="left:738.5px;top:666.5px;width:340px;height:70.5px"></div>
<div class="grp" style="left:738.5px;top:750.5px;width:340px;height:128.5px"></div>
<div class="box" style="left:745.5px;top:499.5px;width:151.5px;height:23px;border-color:#8d8d8d"></div>
<svg class="chev" style="left:882.8px;top:508.5px" viewBox="0 0 9 6"><path d="M0.5,0.8 L4.5,4.8 L8.5,0.8" fill="none" stroke="#444" stroke-width="1.2"/></svg>
<div class="fld" style="left:900.5px;top:525.0px"></div>
<div class="fld" style="left:963.5px;top:525.0px"></div>
<div class="fld" style="left:1026.5px;top:525.0px"></div>
<div class="fld" style="left:900.5px;top:550.5px"></div>
<div class="fld" style="left:963.5px;top:550.5px"></div>
<div class="fld" style="left:1026.5px;top:550.5px"></div>
<div class="fld" style="left:900.5px;top:576.0px"></div>
<div class="fld" style="left:963.5px;top:576.0px"></div>
<div class="fld" style="left:1026.5px;top:576.0px"></div>
<div class="fld" style="left:900.5px;top:602.0px"></div>
<div class="fld" style="left:963.5px;top:602.0px"></div>
<div class="fld" style="left:1026.5px;top:602.0px"></div>
<svg class="abs" style="left:746px;top:594px" width="16" height="16" viewBox="0 0 16 16"><path d="M4.2,7.5V5a3.8,3.8 0 0 1 7.6,0V7.5" fill="none" stroke="#808080" stroke-width="2"/><rect x="1.8" y="7.2" width="12.4" height="7.4" rx="1" fill="#808080"/><polygon points="6.8,9.2 10.2,10.9 6.8,12.6" fill="#fff"/></svg>
<div class="box" style="left:745.5px;top:632.5px;width:12px;height:12px;border-color:#333"></div>
<div class="abs" style="left:738px;top:885.5px;width:340px;height:30px;background:#e1e1e1;border-top:1px solid #d0d0d0"></div>
<span class="t " style="left:738.0px;top:1.0px;letter-spacing:-0.408px;">Baskı ayarları :</span>
<span class="t " style="left:792.3px;top:22.0px;letter-spacing:-0.159px;">0.20 mm NORMAL (0.4 mm nozzle)</span>
<span class="t " style="left:738.0px;top:43.6px;letter-spacing:-0.069px;">Filament :</span>
<span class="t " style="left:792.3px;top:64.5px;letter-spacing:-0.385px;">Prusament PLA @CREALITY - Copy</span>
<span class="t " style="left:738.0px;top:86.7px;letter-spacing:-0.516px;">Yazıcı :</span>
<span class="t " style="left:792.3px;top:108.0px;letter-spacing:-0.186px;">Creality Ender-3 (0.4 mm nozzle)</span>
<span class="t " style="left:739.6px;top:139.0px;letter-spacing:-0.363px;">Destekler:</span>
<span class="t " style="left:798.7px;top:139.5px;letter-spacing:-0.049px;">Hiçbiri</span>
<span class="t " style="left:739.6px;top:166.5px;letter-spacing:-0.215px;">Dolgu:</span>
<span class="t " style="left:783.7px;top:166.5px;letter-spacing:-0.910px;">15%</span>
<span class="t " style="left:876.4px;top:167.0px;letter-spacing:-0.226px;">Kenar (Brim):</span>
<span class="t " style="left:744.4px;top:199.4px;letter-spacing:-0.100px;">İsim</span>
<span class="t " style="left:1041.7px;top:199.4px;letter-spacing:0.3px;">Editing</span>
<span class="t " style="left:758.0px;top:221.8px;letter-spacing:0.103px;">johnlockeedited.obj</span>
<span class="t b bgw" style="left:750.8px;top:474.5px;letter-spacing:-0.129px;">Nesne yönetimi</span>
<span class="t " style="left:750.8px;top:500.5px;letter-spacing:0.023px;">Dünya koordinatları</span>
<span class="t b" style="left:916.0px;top:499.6px;">X</span>
<span class="t b" style="left:978.5px;top:499.6px;">Y</span>
<span class="t b" style="left:1042.0px;top:499.6px;">Z</span>
<span class="t " style="left:745.3px;top:527.4px;letter-spacing:-0.148px;">Pozisyon:</span>
<span class="t " style="left:745.3px;top:553.9px;letter-spacing:0.059px;">Çevir:</span>
<span class="t " style="left:764.5px;top:579.5px;letter-spacing:0.197px;">Ölçek:</span>
<span class="t " style="left:764.5px;top:605.7px;letter-spacing:0.028px;">Boyut:</span>
<span class="t " style="left:759.4px;top:628.0px;letter-spacing:0.373px;">Inches</span>
<span class="t " style="left:904.9px;top:525.5px;letter-spacing:-0.328px;">115,5</span>
<span class="t " style="left:967.5px;top:525.5px;letter-spacing:-0.328px;">115,5</span>
<span class="t " style="left:1030.5px;top:525.5px;letter-spacing:-0.266px;">62,56</span>
<span class="t " style="left:904.9px;top:551.2px;letter-spacing:-0.487px;">0</span>
<span class="t " style="left:967.5px;top:551.2px;letter-spacing:-0.487px;">0</span>
<span class="t " style="left:1030.5px;top:551.2px;letter-spacing:-0.487px;">0</span>
<span class="t " style="left:904.9px;top:576.8px;letter-spacing:-0.177px;">100</span>
<span class="t " style="left:967.5px;top:576.8px;letter-spacing:-0.177px;">100</span>
<span class="t " style="left:1030.5px;top:576.8px;letter-spacing:-0.177px;">100</span>
<span class="t " style="left:904.9px;top:602.6px;letter-spacing:-0.266px;">82,99</span>
<span class="t " style="left:967.5px;top:602.6px;letter-spacing:-0.266px;">43,62</span>
<span class="t " style="left:1030.5px;top:602.6px;letter-spacing:-0.367px;">125,12</span>
<span class="t b bgw" style="left:747.6px;top:656.6px;letter-spacing:-0.400px;">Bilgi</span>
<span class="t " style="left:743.4px;top:673.6px;letter-spacing:-0.072px;">Boyut:</span>
<span class="t " style="left:824.3px;top:673.6px;letter-spacing:-0.537px;">82,99 x 43,62 x 125,12</span>
<span class="t " style="left:950.6px;top:673.6px;letter-spacing:-0.091px;">Hacim:</span>
<span class="t " style="left:1003.3px;top:673.6px;letter-spacing:-0.682px;">121827,57</span>
<span class="t " style="left:743.4px;top:695.0px;letter-spacing:-0.598px;">Yüzey Sayısı:</span>
<span class="t " style="left:824.3px;top:695.0px;letter-spacing:-0.423px;">318754 (1 shell)</span>
<span class="t " style="left:745.3px;top:715.1px;letter-spacing:-0.122px;">No errors detected</span>
<span class="t b bgw" style="left:747.6px;top:740.7px;letter-spacing:-0.293px;">Dilimlenmiş Bilgi</span>
<span class="t " style="left:743.4px;top:758.3px;letter-spacing:-0.107px;">Kullanılan Filament (g)</span>
<span class="t " style="left:896.2px;top:758.3px;letter-spacing:-0.686px;">50,77</span>
<span class="t " style="left:743.4px;top:779.0px;letter-spacing:-0.068px;">Kullanılan Filament (m)</span>
<span class="t " style="left:896.2px;top:779.0px;letter-spacing:-0.686px;">17,02</span>
<span class="t " style="left:743.4px;top:799.2px;letter-spacing:-0.019px;">Kullanılan Filament (mm³)</span>
<span class="t " style="left:896.2px;top:799.2px;letter-spacing:-0.783px;">40942,41</span>
<span class="t " style="left:743.4px;top:821.3px;letter-spacing:-0.031px;">Maliyet</span>
<span class="t " style="left:896.2px;top:821.3px;letter-spacing:-0.640px;">1,27</span>
<span class="t " style="left:743.4px;top:842.0px;letter-spacing:-0.236px;">Tahmini baskı süresi:</span>
<span class="t " style="left:752.4px;top:857.4px;letter-spacing:0.184px;">- normal mod</span>
<span class="t " style="left:896.2px;top:857.4px;letter-spacing:-0.301px;">5h54m</span>
<span class="t b" style="left:895.3px;top:891.0px;letter-spacing:-0.211px;">G-code Dışa Aktar</span>
<span class="t " style="left:52.3px;top:881.5px;letter-spacing:-0.469px;">Göster</span>
<span class="t " style="left:96.6px;top:881.5px;letter-spacing:-0.128px;">Ayarlar</span>
<span class="t s11" style="left:572.5px;top:865.8px;letter-spacing:-0.136px;">532826</span>
<span class="t s11" style="left:341.3px;top:898.0px;letter-spacing:-0.153px;">532820</span>
<span class="t " style="left:628.3px;top:1.2px;letter-spacing:-0.651px;">125,20</span>
<span class="t " style="left:628.3px;top:16.1px;letter-spacing:-0.683px;">(626)</span>
<span class="t " style="left:695.2px;top:869.1px;letter-spacing:-0.640px;">0,20</span>
<span class="t " style="left:695.2px;top:884.2px;">(1)</span>
<span class="t g" style="left:696.0px;top:843.2px;letter-spacing:-0.640px;">5,00</span>
<span class="t g" style="left:696.0px;top:808.4px;letter-spacing:-0.606px;">10,00</span>
<span class="t g" style="left:696.0px;top:773.5px;letter-spacing:-0.606px;">15,00</span>
<span class="t g" style="left:696.0px;top:738.7px;letter-spacing:-0.606px;">20,00</span>
<span class="t g" style="left:696.0px;top:703.8px;letter-spacing:-0.606px;">25,00</span>
<span class="t g" style="left:696.0px;top:669.0px;letter-spacing:-0.606px;">30,00</span>
<span class="t g" style="left:696.0px;top:634.2px;letter-spacing:-0.606px;">35,00</span>
<span class="t g" style="left:696.0px;top:599.3px;letter-spacing:-0.606px;">40,00</span>
<span class="t g" style="left:696.0px;top:564.5px;letter-spacing:-0.606px;">45,00</span>
<span class="t g" style="left:696.0px;top:529.6px;letter-spacing:-0.606px;">50,00</span>
<span class="t g" style="left:696.0px;top:494.8px;letter-spacing:-0.606px;">55,00</span>
<span class="t g" style="left:696.0px;top:460.0px;letter-spacing:-0.606px;">60,00</span>
<span class="t g" style="left:696.0px;top:425.1px;letter-spacing:-0.606px;">65,00</span>
<span class="t g" style="left:696.0px;top:390.3px;letter-spacing:-0.606px;">70,00</span>
<span class="t g" style="left:696.0px;top:355.4px;letter-spacing:-0.606px;">75,00</span>
<span class="t g" style="left:696.0px;top:320.6px;letter-spacing:-0.606px;">80,00</span>
<span class="t g" style="left:696.0px;top:285.8px;letter-spacing:-0.606px;">85,00</span>
<span class="t g" style="left:696.0px;top:250.9px;letter-spacing:-0.606px;">90,00</span>
<span class="t g" style="left:696.0px;top:216.1px;letter-spacing:-0.606px;">95,00</span>
<span class="t g" style="left:696.0px;top:181.2px;letter-spacing:-0.801px;">100,00</span>
<span class="t g" style="left:696.0px;top:146.4px;letter-spacing:-0.801px;">105,00</span>
<span class="t g" style="left:696.0px;top:111.6px;letter-spacing:-0.652px;">110,00</span>
<span class="t g" style="left:696.0px;top:76.7px;letter-spacing:-0.652px;">115,00</span>
<span class="t g" style="left:696.0px;top:41.9px;letter-spacing:-0.801px;">120,00</span>
<span class="t g" style="left:696.0px;top:7.0px;letter-spacing:-0.801px;">125,00</span>
<span class="t lg" style="left:34.2px;top:9.2px;letter-spacing:-0.359px;">Percentage</span>
<span class="t lg" style="left:111.5px;top:9.2px;letter-spacing:-0.144px;">Used filament</span>
<span class="t lg" style="left:-12.0px;top:9.2px;letter-spacing:-0.172px;">Zaman</span>
<span class="t lg" style="left:-11.0px;top:32.0px;letter-spacing:-0.241px;">1h19m</span>
<span class="t lg" style="left:72.4px;top:32.0px;letter-spacing:-0.846px;">22,3%</span>
<span class="t lg" style="left:111.5px;top:32.0px;letter-spacing:-0.498px;">5,16 m</span>
<span class="t lg" style="left:156.6px;top:32.0px;letter-spacing:-0.478px;">15,39 g</span>
<span class="t lg" style="left:-11.5px;top:51.0px;letter-spacing:-0.133px;">1h1m</span>
<span class="t lg" style="left:72.4px;top:51.0px;letter-spacing:-0.846px;">17,3%</span>
<span class="t lg" style="left:111.5px;top:51.0px;letter-spacing:-0.498px;">2,54 m</span>
<span class="t lg" style="left:156.6px;top:51.0px;letter-spacing:-0.463px;">7,58 g</span>
<span class="t lg" style="left:-11.0px;top:70.2px;letter-spacing:-0.241px;">1h51m</span>
<span class="t lg" style="left:72.4px;top:70.2px;letter-spacing:-0.846px;">31,3%</span>
<span class="t lg" style="left:111.5px;top:70.2px;letter-spacing:-0.498px;">6,87 m</span>
<span class="t lg" style="left:156.6px;top:70.2px;letter-spacing:-0.478px;">20,49 g</span>
<span class="t lg" style="left:-11.0px;top:89.0px;letter-spacing:-0.241px;">1h36m</span>
<span class="t lg" style="left:72.4px;top:89.0px;letter-spacing:-0.846px;">27,2%</span>
<span class="t lg" style="left:111.5px;top:89.0px;letter-spacing:-0.498px;">2,16 m</span>
<span class="t lg" style="left:156.6px;top:89.0px;letter-spacing:-0.463px;">6,43 g</span>
<span class="t lg" style="left:-11.4px;top:108.0px;">2m</span>
<span class="t lg" style="left:72.4px;top:108.0px;letter-spacing:-0.865px;">0,6%</span>
<span class="t lg" style="left:111.5px;top:108.0px;letter-spacing:-0.498px;">0,08 m</span>
<span class="t lg" style="left:156.6px;top:108.0px;letter-spacing:-0.463px;">0,23 g</span>
<span class="t lg" style="left:-11.4px;top:127.0px;">4m</span>
<span class="t lg" style="left:72.4px;top:127.0px;letter-spacing:-0.865px;">1,0%</span>
<span class="t lg" style="left:111.5px;top:127.0px;letter-spacing:-0.498px;">0,19 m</span>
<span class="t lg" style="left:156.6px;top:127.0px;letter-spacing:-0.463px;">0,56 g</span>
<span class="t lg" style="left:-12.5px;top:146.0px;">16s</span>
<span class="t lg" style="left:72.4px;top:146.0px;letter-spacing:-0.865px;">0,1%</span>
<span class="t lg" style="left:111.5px;top:146.0px;letter-spacing:-0.498px;">0,01 m</span>
<span class="t lg" style="left:156.6px;top:146.0px;letter-spacing:-0.463px;">0,03 g</span>
<span class="t lg" style="left:-12.5px;top:165.0px;">40s</span>
<span class="t lg" style="left:72.4px;top:165.0px;letter-spacing:-0.865px;">0,2%</span>
<span class="t lg" style="left:111.5px;top:165.0px;letter-spacing:-0.498px;">0,02 m</span>
<span class="t lg" style="left:156.6px;top:165.0px;letter-spacing:-0.463px;">0,06 g</span>
<span class="t lg" style="left:-125.0px;top:188.6px;letter-spacing:0.176px;">Estimated printing times:</span>
</body></html>
